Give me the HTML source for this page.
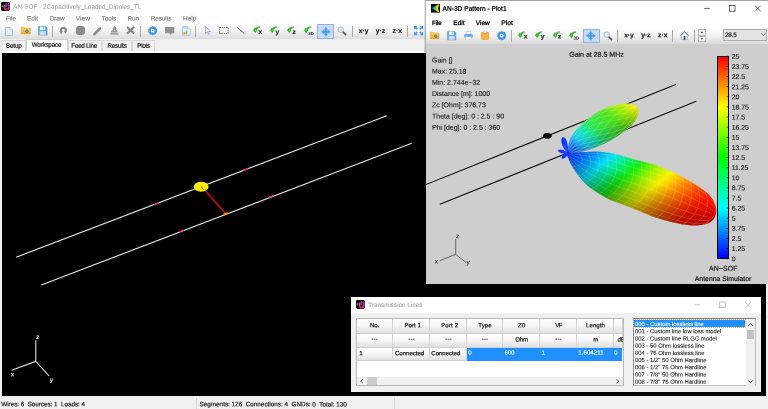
<!DOCTYPE html>
<html><head><meta charset="utf-8"><title>AN-SOF</title>
<style>
html,body{margin:0;padding:0}
body{width:768px;height:409px;overflow:hidden;position:relative;background:#f0f0f0;font-family:"Liberation Sans",sans-serif}
.b{position:absolute;display:block;box-sizing:border-box}
.tx{left:0;top:0}
#w{position:absolute;left:0;top:0;width:768px;height:409px;overflow:hidden;will-change:transform}
text{white-space:pre}
svg{overflow:visible}
</style></head><body><div id="w">
<svg width="0" height="0" style="position:absolute"><defs>
<linearGradient id="gFolder" x1="0" y1="0" x2="0" y2="1"><stop offset="0" stop-color="#ffd257"/><stop offset="1" stop-color="#f5a21b"/></linearGradient>
<linearGradient id="gBlue" x1="0" y1="0" x2="0" y2="1"><stop offset="0" stop-color="#7cc0fa"/><stop offset="1" stop-color="#3a92e8"/></linearGradient>
<linearGradient id="gDoc" x1="0" y1="0" x2="1" y2="1"><stop offset="0" stop-color="#ffffff"/><stop offset="1" stop-color="#d4e6f7"/></linearGradient>
</defs></svg>
<div class="b" style="left:0.00px;top:0.00px;width:768.00px;height:23.30px;background:#fff"></div>
<svg class="b" style="left:1.10px;top:1.75px;" width="8.9" height="8.9" viewBox="0 0 8.9 8.9"><rect x="0" y="0" width="8.9" height="8.9" rx="1.3" fill="#050505"/><ellipse cx="1.6" cy="4.2" rx="0.75" ry="1.3" fill="#6f9f38"/><path d="M3.5 2.6V5.2a2.1 2.5 0 0 0 4.2 0V1.5" fill="none" stroke="#d6379c" stroke-width="1.5"/><path d="M7.5 1.5V5.6" stroke="#8c44b4" stroke-width="1.1"/><ellipse cx="3.6" cy="4.2" rx="0.7" ry="1.3" fill="#e0603c"/><ellipse cx="5.5" cy="3.8" rx="0.9" ry="1.5" fill="#3868e0"/><ellipse cx="5.3" cy="7.2" rx="1.3" ry="0.8" fill="#f0203c"/><ellipse cx="5.4" cy="2" rx="0.9" ry="0.9" fill="#e040a0"/></svg>
<svg class="b tx" width="1" height="1"><text x="13.30" y="8.70" transform="rotate(0.04 13.3 8.7)" font-size="6.36" fill="#9a9a9a" stroke="#9a9a9a" stroke-width="0.05">AN-SOF - 2Capacitively_Loaded_Dipoles_TL</text></svg>
<svg class="b tx" width="1" height="1"><text x="6.00" y="20.40" transform="rotate(0.04 6.0 20.4)" font-size="6.30" letter-spacing="-0.088" fill="#6c6c6c" stroke="#6c6c6c" stroke-width="0.08">File</text></svg>
<svg class="b tx" width="1" height="1"><text x="27.00" y="20.40" transform="rotate(0.04 27.0 20.4)" font-size="6.38" fill="#6c6c6c" stroke="#6c6c6c" stroke-width="0.08">Edit</text></svg>
<svg class="b tx" width="1" height="1"><text x="49.70" y="20.40" transform="rotate(0.04 49.7 20.4)" font-size="6.43" fill="#6c6c6c" stroke="#6c6c6c" stroke-width="0.08">Draw</text></svg>
<svg class="b tx" width="1" height="1"><text x="75.80" y="20.40" transform="rotate(0.04 75.8 20.4)" font-size="6.61" fill="#6c6c6c" stroke="#6c6c6c" stroke-width="0.08">View</text></svg>
<svg class="b tx" width="1" height="1"><text x="101.70" y="20.40" transform="rotate(0.04 101.7 20.4)" font-size="6.30" letter-spacing="-0.042" fill="#6c6c6c" stroke="#6c6c6c" stroke-width="0.08">Tools</text></svg>
<svg class="b tx" width="1" height="1"><text x="127.50" y="20.40" transform="rotate(0.04 127.5 20.4)" font-size="6.30" letter-spacing="-0.019" fill="#6c6c6c" stroke="#6c6c6c" stroke-width="0.08">Run</text></svg>
<svg class="b tx" width="1" height="1"><text x="150.80" y="20.40" transform="rotate(0.04 150.8 20.4)" font-size="6.30" letter-spacing="-0.073" fill="#6c6c6c" stroke="#6c6c6c" stroke-width="0.08">Results</text></svg>
<svg class="b tx" width="1" height="1"><text x="183.00" y="20.40" transform="rotate(0.04 183.0 20.4)" font-size="6.47" fill="#6c6c6c" stroke="#6c6c6c" stroke-width="0.08">Help</text></svg>
<div class="b" style="left:0.00px;top:23.30px;width:768.00px;height:15.50px;background:linear-gradient(#ffffff 0%,#f4f4f4 45%,#dddddd 100%)"></div>
<div class="b" style="left:0.00px;top:38.80px;width:768.00px;height:13.80px;background:#f0f0f0"></div>
<div class="b" style="left:0.00px;top:50.60px;width:768.00px;height:2.00px;background:#fdfdfd"></div>
<div class="b" style="left:1.30px;top:40.40px;width:24.90px;height:10.20px;background:#f0f0f0;border:0.5px solid #d9d9d9;border-bottom:none"></div>
<svg class="b tx" width="1" height="1"><text x="5.80" y="47.80" transform="rotate(0.04 5.8 47.8)" font-size="6.30" letter-spacing="-0.113" fill="#111" stroke="#111" stroke-width="0.18">Setup</text></svg>
<div class="b" style="left:25.80px;top:39.20px;width:42.20px;height:12.30px;background:#fff;border:0.5px solid #d0d0d0;border-bottom:none"></div>
<svg class="b tx" width="1" height="1"><text x="31.70" y="46.70" transform="rotate(0.04 31.7 46.7)" font-size="6.30" letter-spacing="-0.211" fill="#111" stroke="#111" stroke-width="0.18">Workspace</text></svg>
<div class="b" style="left:68.00px;top:40.40px;width:34.40px;height:10.20px;background:#f0f0f0;border:0.5px solid #d9d9d9;border-bottom:none"></div>
<svg class="b tx" width="1" height="1"><text x="71.30" y="47.80" transform="rotate(0.04 71.3 47.8)" font-size="6.30" letter-spacing="-0.258" fill="#111" stroke="#111" stroke-width="0.18">Feed Line</text></svg>
<div class="b" style="left:102.00px;top:40.40px;width:30.40px;height:10.20px;background:#f0f0f0;border:0.5px solid #d9d9d9;border-bottom:none"></div>
<svg class="b tx" width="1" height="1"><text x="107.50" y="47.80" transform="rotate(0.04 107.5 47.8)" font-size="6.30" letter-spacing="-0.258" fill="#111" stroke="#111" stroke-width="0.18">Results</text></svg>
<div class="b" style="left:132.00px;top:40.40px;width:23.10px;height:10.20px;background:#f0f0f0;border:0.5px solid #d9d9d9;border-bottom:none"></div>
<svg class="b tx" width="1" height="1"><text x="137.20" y="47.80" transform="rotate(0.04 137.2 47.8)" font-size="6.30" letter-spacing="-0.241" fill="#111" stroke="#111" stroke-width="0.18">Plots</text></svg>
<div class="b" style="left:2.00px;top:52.60px;width:763.60px;height:343.20px;background:#000"></div>
<div class="b" style="left:0.00px;top:395.80px;width:768.00px;height:13.20px;background:#f0f0f0"></div>
<div class="b" style="left:196.00px;top:397.50px;width:0.60px;height:11.50px;background:#d7d7d7"></div>
<div class="b" style="left:393.60px;top:397.50px;width:0.60px;height:11.50px;background:#d7d7d7"></div>
<svg class="b tx" width="1" height="1"><text x="1.30" y="406.30" transform="rotate(0.04 1.3 406.3)" font-size="6.30" letter-spacing="-0.023" fill="#1a1a1a" stroke="#1a1a1a" stroke-width="0.18">Wires: 6  Sources: 1  Loads: 4</text></svg>
<svg class="b tx" width="1" height="1"><text x="199.50" y="406.30" transform="rotate(0.04 199.5 406.3)" font-size="6.35" fill="#1a1a1a" stroke="#1a1a1a" stroke-width="0.18">Segments: 126  Connections: 4  GNDs: 0  Total: 130</text></svg>
<svg class="b" style="left:5.00px;top:26.60px;" width="8" height="9" viewBox="0 0 8 9"><path d="M0.4 0.4h4.6l2.5 2.5v5.7h-7.1z" fill="url(#gDoc)" stroke="#7fb2e6" stroke-width="0.7"/><path d="M5 0.4v2.5h2.5" fill="#eaf3fc" stroke="#7fb2e6" stroke-width="0.6"/></svg>
<svg class="b" style="left:20.60px;top:26.40px" width="9.6" height="9.6" viewBox="0 0 10 10"><path d="M0.3 1.1h3.5l0.9 1h5v6.3h-9.4z" fill="url(#gFolder)" stroke="#eea320" stroke-width="0.4"/><path d="M6.2 3.5l2.1 2.1-2.1 2.1-2.1-2.1z" fill="#2a7fdc"/><path d="M6.2 4.7v1.8M5.3 5.6h1.8" stroke="#9cc8f4" stroke-width="0.45"/></svg>
<svg class="b" style="left:37.80px;top:26.40px" width="9.6" height="9.6" viewBox="0 0 10 10"><path d="M0.5 0.5h7.8l1.2 1.2v7.8h-9z" fill="#5aaaf2" stroke="#3a90e2" stroke-width="0.5"/><rect x="2" y="0.8" width="5.4" height="3.4" fill="#f4f9fe"/><rect x="5.6" y="1.2" width="1.1" height="2.4" fill="#5aaaf2"/><rect x="1.8" y="5.4" width="6.4" height="3.9" fill="#d6dbe1"/></svg>
<div class="b" style="left:51.55px;top:25.50px;width:0.90px;height:11.50px;background:#a9a9a9"></div>
<svg class="b" style="left:59.30px;top:26.30px;" width="8.6" height="8.6" viewBox="0 0 8.6 8.6"><path d="M2.3 5.6A2.5 2.5 0 1 1 5.6 6.5" fill="none" stroke="#8a8a8a" stroke-width="2.3"/><path d="M0.2 4.9l3.9 0.2-2 3.4z" fill="#8a8a8a"/></svg>
<div class="b" style="left:75.7px;top:26.3px;width:9.3px;height:8.9px;border-radius:3.3px;background:#8a8a8a"></div>
<svg class="b" style="left:93.00px;top:26.50px;" width="8.8" height="8.8" viewBox="0 0 8.8 8.8"><path d="M1.5 7.1L7.1 1.5" stroke="#8a8a8a" stroke-width="2.5" stroke-linecap="round"/><path d="M0.2 8.6l0.5-2 1.5 1.5z" fill="#8a8a8a"/></svg>
<svg class="b" style="left:110.20px;top:26.30px;" width="8.8" height="8.6" viewBox="0 0 8.8 8.6"><path d="M0.3 7.9h8.2" stroke="#8a8a8a" stroke-width="1.2"/><path d="M1 6.4h6.6l-0.5-2.2h-1.3l0.5-2-1.9-2.1-1.7 2.1 0.7 2h-1.5z" fill="#8a8a8a"/><path d="M3.3 5.6l1.1-2.6 1.1 2.6z" fill="#e6e6e6"/></svg>
<svg class="b" style="left:126.00px;top:26.40px;" width="9.2" height="8.4" viewBox="0 0 9.2 8.4"><path d="M1 0.9l7.2 6.6M8.2 0.9l-7.2 6.6" stroke="#7e7e7e" stroke-width="2.1"/></svg>
<div class="b" style="left:140.05px;top:25.50px;width:0.90px;height:11.50px;background:#a9a9a9"></div>
<svg class="b" style="left:148.00px;top:26.40px" width="9.4" height="9.4" viewBox="0 0 10 10"><circle cx="5" cy="5" r="3.7" fill="none" stroke="#3b8ce2" stroke-width="2.2" stroke-dasharray="1.7 0.62"/><circle cx="5" cy="5" r="3.1" fill="none" stroke="#4797e8" stroke-width="2.2"/><circle cx="5" cy="5" r="1.6" fill="#f4f9ff"/><circle cx="5" cy="5" r="0.7" fill="#5aa0ea"/></svg>
<svg class="b" style="left:164.60px;top:27.00px;" width="9.4" height="8.4" viewBox="0 0 9.4 8.4"><path d="M0.8 0h7.8a.8.8 0 0 1 .8.8v4.6a.8.8 0 0 1-.8.8h-1.6l-1.3 1.8-1.3-1.8h-3.6a.8.8 0 0 1-.8-.8v-4.6a.8.8 0 0 1 .8-.8z" fill="#909090"/></svg>
<svg class="b" style="left:182.00px;top:26.30px;" width="8.6" height="9.6" viewBox="0 0 8.6 9.6"><path d="M0.4 0.4h5.2l2.6 2.6v6.2h-7.8z" fill="#eef5fd" stroke="#86b6ea" stroke-width="0.7"/><path d="M0.8 0.8h4.6l1.4 1.4v0.6h-6z" fill="#b9d8f6"/><path d="M5.6 0.4v2.6h2.6" fill="#dcebfa" stroke="#86b6ea" stroke-width="0.5"/><rect x="1.6" y="6" width="1.1" height="2.4" fill="#e8573f"/><rect x="2.9" y="5.2" width="1.1" height="3.2" fill="#f3b833"/><rect x="4.2" y="4.4" width="1.1" height="4" fill="#5cbf50"/></svg>
<div class="b" style="left:195.05px;top:25.50px;width:0.90px;height:11.50px;background:#a9a9a9"></div>
<svg class="b" style="left:204.60px;top:26.40px;" width="6.2" height="9" viewBox="0 0 6.2 9"><path d="M0.5 0.4v7l1.7-1.5 1.2 2.6 1-.5-1.2-2.5h2.3z" fill="#eef4fd" stroke="#6f8fd0" stroke-width="0.6"/></svg>
<svg class="b" style="left:219.30px;top:27.40px;" width="9.6" height="7" viewBox="0 0 9.6 7"><rect x="0.5" y="0.5" width="8.6" height="6" fill="none" stroke="#5c5c5c" stroke-width="0.8" stroke-dasharray="1.5 0.7"/></svg>
<svg class="b" style="left:236.80px;top:27.20px;" width="7.4" height="6.8" viewBox="0 0 7.4 6.8"><path d="M0.3 0.3l6.8 6.2" stroke="#444" stroke-width="0.9"/></svg>
<svg class="b" style="left:253.00px;top:26.30px" width="8" height="7" viewBox="0 0 8 7"><path d="M0.25 4.5L2 1.7L2.7 2.4C3.4 1.2 5 0.5 6.7 0.5L6.9 1.7C5.6 1.7 4.4 2.3 3.7 3.4L4.3 4L2.5 6.8Z" fill="#34b82c" stroke="#1e8c1a" stroke-width="0.3" stroke-linejoin="round"/><circle cx="2.4" cy="4.2" r="0.8" fill="#62dc50" opacity="0.8"/><path d="M5 1.05C5.6 0.95 6.2 0.95 6.7 1" stroke="#d0f0e0" stroke-width="0.35" fill="none"/></svg>
<svg class="b tx" width="1" height="1"><text x="258.40" y="33.90" transform="rotate(0.04 258.4 33.9)" font-size="6.60" font-weight="bold" fill="#2a2a2a" stroke="#2a2a2a" stroke-width="0.18">x</text></svg>
<svg class="b" style="left:270.00px;top:26.30px" width="8" height="7" viewBox="0 0 8 7"><path d="M0.25 4.5L2 1.7L2.7 2.4C3.4 1.2 5 0.5 6.7 0.5L6.9 1.7C5.6 1.7 4.4 2.3 3.7 3.4L4.3 4L2.5 6.8Z" fill="#34b82c" stroke="#1e8c1a" stroke-width="0.3" stroke-linejoin="round"/><circle cx="2.4" cy="4.2" r="0.8" fill="#62dc50" opacity="0.8"/><path d="M5 1.05C5.6 0.95 6.2 0.95 6.7 1" stroke="#d0f0e0" stroke-width="0.35" fill="none"/></svg>
<svg class="b tx" width="1" height="1"><text x="275.40" y="33.90" transform="rotate(0.04 275.4 33.9)" font-size="6.60" font-weight="bold" fill="#2a2a2a" stroke="#2a2a2a" stroke-width="0.18">y</text></svg>
<svg class="b" style="left:287.00px;top:26.30px" width="8" height="7" viewBox="0 0 8 7"><path d="M0.25 4.5L2 1.7L2.7 2.4C3.4 1.2 5 0.5 6.7 0.5L6.9 1.7C5.6 1.7 4.4 2.3 3.7 3.4L4.3 4L2.5 6.8Z" fill="#34b82c" stroke="#1e8c1a" stroke-width="0.3" stroke-linejoin="round"/><circle cx="2.4" cy="4.2" r="0.8" fill="#62dc50" opacity="0.8"/><path d="M5 1.05C5.6 0.95 6.2 0.95 6.7 1" stroke="#d0f0e0" stroke-width="0.35" fill="none"/></svg>
<svg class="b tx" width="1" height="1"><text x="292.40" y="33.90" transform="rotate(0.04 292.4 33.9)" font-size="6.60" font-weight="bold" fill="#2a2a2a" stroke="#2a2a2a" stroke-width="0.18">z</text></svg>
<svg class="b" style="left:304.00px;top:26.30px" width="8" height="7" viewBox="0 0 8 7"><path d="M0.25 4.5L2 1.7L2.7 2.4C3.4 1.2 5 0.5 6.7 0.5L6.9 1.7C5.6 1.7 4.4 2.3 3.7 3.4L4.3 4L2.5 6.8Z" fill="#34b82c" stroke="#1e8c1a" stroke-width="0.3" stroke-linejoin="round"/><circle cx="2.4" cy="4.2" r="0.8" fill="#62dc50" opacity="0.8"/><path d="M5 1.05C5.6 0.95 6.2 0.95 6.7 1" stroke="#d0f0e0" stroke-width="0.35" fill="none"/></svg>
<svg class="b tx" width="1" height="1"><text x="308.20" y="34.90" transform="rotate(0.04 308.2 34.9)" font-size="4.40" font-weight="bold" fill="#223">3D</text></svg>
<div class="b" style="left:317.00px;top:24.20px;width:16.80px;height:14.40px;background:#c9daf4;border:0.6px solid #8fb0e6"></div>
<svg class="b" style="left:320.60px;top:26.60px" width="9.6" height="9.6" viewBox="0 0 10 10"><path d="M5 0.1l2 2.7h-1.1v1.3h1.3v-1.1l2.7 2-2.7 2v-1.1h-1.3v1.3h1.1l-2 2.7-2-2.7h1.1v-1.3h-1.3v1.1l-2.7-2 2.7-2v1.1h1.3v-1.3h-1.1z" fill="#3f9cf0" stroke="#3f9cf0" stroke-width="0.25" stroke-linejoin="round"/></svg>
<svg class="b" style="left:337.40px;top:26.40px" width="9.6" height="9.6" viewBox="0 0 10 10"><path d="M5.6 5.6l3.4 3.4" stroke="#555" stroke-width="1.7" stroke-linecap="round"/><circle cx="3.8" cy="3.8" r="2.9" fill="#d9ecfb" stroke="#a9b4c0" stroke-width="0.9"/></svg>
<div class="b" style="left:352.25px;top:25.50px;width:0.90px;height:11.50px;background:#a9a9a9"></div>
<svg class="b tx" width="1" height="1"><text x="358.80" y="33.00" transform="rotate(0.04 358.8 33.0)" font-size="6.57" font-weight="bold" fill="#222" stroke="#222" stroke-width="0.18">x·y</text></svg>
<svg class="b tx" width="1" height="1"><text x="375.80" y="33.00" transform="rotate(0.04 375.8 33.0)" font-size="6.84" font-weight="bold" fill="#222" stroke="#222" stroke-width="0.18">y·z</text></svg>
<svg class="b tx" width="1" height="1"><text x="392.50" y="33.00" transform="rotate(0.04 392.5 33.0)" font-size="6.84" font-weight="bold" fill="#222" stroke="#222" stroke-width="0.18">z·x</text></svg>
<div class="b" style="left:407.05px;top:25.50px;width:0.90px;height:11.50px;background:#a9a9a9"></div>
<svg class="b" style="left:414.20px;top:26.20px;" width="9.2" height="9.2" viewBox="0 0 9.2 9.2"><g fill="#3c9ae8"><path d="M0 0h3.6l-1.2 1.2 1.4 1.4-1.2 1.2-1.4-1.4-1.2 1.2z"/><path d="M9.2 0v3.6l-1.2-1.2-1.4 1.4-1.2-1.2 1.4-1.4-1.2-1.2z"/><path d="M0 9.2v-3.6l1.2 1.2 1.4-1.4 1.2 1.2-1.4 1.4 1.2 1.2z"/><path d="M9.2 9.2h-3.6l1.2-1.2-1.4-1.4 1.2-1.2 1.4 1.4 1.2-1.2z"/></g></svg>
<svg class="b" style="left:0.00px;top:0.00px;" width="768" height="409" viewBox="0 0 768 409"><g stroke-linecap="butt" fill="none">
<path d="M16.2 257.2L386.7 115.8M41.3 285L411.7 143.3" stroke="#e2e2e2" stroke-width="1.15"/>
<path d="M202 187L225.8 213.7" stroke="#ee0000" stroke-width="1.3"/>
<path d="M223.6 214.6l4.4-1.7" stroke="#ff9a00" stroke-width="1.6"/>
<g stroke="#ff1493" stroke-width="1.5">
<path d="M154.3 204.6l4.8-1.84"/><path d="M243.4 170.4l4.8-1.84"/><path d="M268.9 197.2l4.8-1.84"/><path d="M179 231.9l4.8-1.84"/></g>
<ellipse cx="201.2" cy="186.7" rx="7.4" ry="5" fill="#ffee00" stroke="none"/>
<path d="M201.2 186.7l2.6 2.9" stroke="#e00000" stroke-width="0.8"/>
<path d="M35.8 340.3V361.3L11.7 370.2M35.8 361.3L49.2 376" stroke="#e6e6e6" stroke-width="1.05"/>
</g></svg>
<svg class="b tx" width="1" height="1"><text x="36.20" y="339.00" transform="rotate(0.04 36.2 339.0)" font-size="6.00" fill="#e8e8f4" stroke="#e8e8f4" stroke-width="0.18">z</text></svg>
<svg class="b tx" width="1" height="1"><text x="11.00" y="376.20" transform="rotate(0.04 11.0 376.2)" font-size="6.00" fill="#e8e8f4" stroke="#e8e8f4" stroke-width="0.18">x</text></svg>
<svg class="b tx" width="1" height="1"><text x="50.00" y="381.80" transform="rotate(0.04 50.0 381.8)" font-size="6.00" fill="#e8e8f4" stroke="#e8e8f4" stroke-width="0.18">y</text></svg>
<div class="b" style="left:424.20px;top:0.00px;width:1.80px;height:285.50px;background:linear-gradient(90deg,rgba(0,0,0,0.0),rgba(0,0,0,0.4))"></div>
<div class="b" style="left:425.80px;top:0.00px;width:342.20px;height:284.00px;background:#fff"></div>
<div class="b" style="left:425.80px;top:0.00px;width:342.20px;height:0.60px;background:#a6a6a6"></div>
<svg class="b" style="left:430.80px;top:4.20px;" width="9" height="8.6" viewBox="0 0 9 8.6"><defs><linearGradient id="gJet" x1="0" y1="0" x2="1" y2="0"><stop offset="0" stop-color="#1038ff"/><stop offset="0.3" stop-color="#18c8e8"/><stop offset="0.5" stop-color="#30d830"/><stop offset="0.7" stop-color="#ffe000"/><stop offset="1" stop-color="#ff7a00"/></linearGradient></defs><rect width="9" height="8.6" fill="#050505"/><path d="M0.6 4.3C2.6 3.4 5 2 6.8 0.6C8.6 0.5 8.9 1.4 8.2 1.9C6.9 2.9 6.9 5.7 8.2 6.7C8.9 7.2 8.6 8.1 6.8 8C5 6.6 2.6 5.2 0.6 4.3z" fill="url(#gJet)"/></svg>
<svg class="b tx" width="1" height="1"><text x="442.50" y="10.80" transform="rotate(0.04 442.5 10.8)" font-size="6.64" fill="#000" stroke="#000" stroke-width="0.25">AN-3D Pattern - Plot1</text></svg>
<svg class="b" style="left:700.00px;top:0.00px;" width="68" height="16" viewBox="0 0 68 16"><g fill="none" stroke="#222" stroke-width="0.7"><path d="M4.2 8.4h5.6"/><rect x="29.4" y="5.6" width="5.6" height="5.6"/><path d="M55.1 5.6l5.6 5.7M60.7 5.6l-5.6 5.7"/></g></svg>
<svg class="b tx" width="1" height="1"><text x="432.00" y="25.10" transform="rotate(0.04 432.0 25.1)" font-size="6.30" letter-spacing="-0.138" fill="#000" stroke="#000" stroke-width="0.28">File</text></svg>
<svg class="b tx" width="1" height="1"><text x="453.30" y="25.10" transform="rotate(0.04 453.3 25.1)" font-size="6.50" fill="#000" stroke="#000" stroke-width="0.28">Edit</text></svg>
<svg class="b tx" width="1" height="1"><text x="475.80" y="25.10" transform="rotate(0.04 475.8 25.1)" font-size="6.47" fill="#000" stroke="#000" stroke-width="0.28">View</text></svg>
<svg class="b tx" width="1" height="1"><text x="501.20" y="25.10" transform="rotate(0.04 501.2 25.1)" font-size="6.73" fill="#000" stroke="#000" stroke-width="0.28">Plot</text></svg>
<div class="b" style="left:425.80px;top:28.20px;width:342.20px;height:15.50px;background:linear-gradient(#ffffff 0%,#f2f2f2 45%,#d9d9d9 100%)"></div>
<div class="b" style="left:425.80px;top:43.70px;width:342.20px;height:240.30px;background:#cecece"></div>
<svg class="b" style="left:430.00px;top:31.20px" width="9.4" height="9.4" viewBox="0 0 10 10"><path d="M0.3 1.1h3.5l0.9 1h5v6.3h-9.4z" fill="url(#gFolder)" stroke="#eea320" stroke-width="0.4"/><path d="M6.2 3.5l2.1 2.1-2.1 2.1-2.1-2.1z" fill="#2a7fdc"/><path d="M6.2 4.7v1.8M5.3 5.6h1.8" stroke="#9cc8f4" stroke-width="0.45"/></svg>
<svg class="b" style="left:446.70px;top:31.20px" width="9.4" height="9.4" viewBox="0 0 10 10"><path d="M0.5 0.5h7.8l1.2 1.2v7.8h-9z" fill="#5aaaf2" stroke="#3a90e2" stroke-width="0.5"/><rect x="2" y="0.8" width="5.4" height="3.4" fill="#f4f9fe"/><rect x="5.6" y="1.2" width="1.1" height="2.4" fill="#5aaaf2"/><rect x="1.8" y="5.4" width="6.4" height="3.9" fill="#d6dbe1"/></svg>
<svg class="b" style="left:464.20px;top:31.00px;" width="9" height="8.8" viewBox="0 0 9 8.8"><rect x="2" y="0.3" width="5" height="3.2" fill="#f6fafe" stroke="#8abcf0" stroke-width="0.5"/><rect x="0.3" y="3.2" width="8.4" height="3.4" rx="0.7" fill="#4c9cea"/><rect x="0.8" y="3.5" width="7.4" height="1" fill="#7cbaf4"/><rect x="1.7" y="5.8" width="5.6" height="2.7" fill="#f2f5f9" stroke="#b8c4d0" stroke-width="0.4"/><circle cx="7.9" cy="6.6" r="0.5" fill="#f08030"/></svg>
<svg class="b" style="left:481.30px;top:31.00px;" width="8.2" height="9" viewBox="0 0 8.2 9"><rect x="0.3" y="1" width="7.6" height="7.8" rx="0.7" fill="#f59a26"/><rect x="1" y="2.2" width="6.2" height="6" fill="#fbb040"/><rect x="2.5" y="0.1" width="3.2" height="1.9" rx="0.4" fill="#ececec" stroke="#b88a40" stroke-width="0.3"/></svg>
<svg class="b" style="left:497.40px;top:31.20px" width="9.4" height="9.4" viewBox="0 0 10 10"><circle cx="5" cy="5" r="3.7" fill="none" stroke="#3b8ce2" stroke-width="2.2" stroke-dasharray="1.7 0.62"/><circle cx="5" cy="5" r="3.1" fill="none" stroke="#4797e8" stroke-width="2.2"/><circle cx="5" cy="5" r="1.6" fill="#f4f9ff"/><circle cx="5" cy="5" r="0.7" fill="#5aa0ea"/></svg>
<div class="b" style="left:511.25px;top:30.40px;width:0.90px;height:11.60px;background:#a9a9a9"></div>
<svg class="b" style="left:518.30px;top:30.70px" width="8" height="7" viewBox="0 0 8 7"><path d="M0.25 4.5L2 1.7L2.7 2.4C3.4 1.2 5 0.5 6.7 0.5L6.9 1.7C5.6 1.7 4.4 2.3 3.7 3.4L4.3 4L2.5 6.8Z" fill="#34b82c" stroke="#1e8c1a" stroke-width="0.3" stroke-linejoin="round"/><circle cx="2.4" cy="4.2" r="0.8" fill="#62dc50" opacity="0.8"/><path d="M5 1.05C5.6 0.95 6.2 0.95 6.7 1" stroke="#d0f0e0" stroke-width="0.35" fill="none"/></svg>
<svg class="b tx" width="1" height="1"><text x="523.70" y="38.60" transform="rotate(0.04 523.7 38.6)" font-size="6.60" font-weight="bold" fill="#2a2a2a" stroke="#2a2a2a" stroke-width="0.18">x</text></svg>
<svg class="b" style="left:535.30px;top:30.70px" width="8" height="7" viewBox="0 0 8 7"><path d="M0.25 4.5L2 1.7L2.7 2.4C3.4 1.2 5 0.5 6.7 0.5L6.9 1.7C5.6 1.7 4.4 2.3 3.7 3.4L4.3 4L2.5 6.8Z" fill="#34b82c" stroke="#1e8c1a" stroke-width="0.3" stroke-linejoin="round"/><circle cx="2.4" cy="4.2" r="0.8" fill="#62dc50" opacity="0.8"/><path d="M5 1.05C5.6 0.95 6.2 0.95 6.7 1" stroke="#d0f0e0" stroke-width="0.35" fill="none"/></svg>
<svg class="b tx" width="1" height="1"><text x="540.70" y="38.60" transform="rotate(0.04 540.7 38.6)" font-size="6.60" font-weight="bold" fill="#2a2a2a" stroke="#2a2a2a" stroke-width="0.18">y</text></svg>
<svg class="b" style="left:552.50px;top:30.70px" width="8" height="7" viewBox="0 0 8 7"><path d="M0.25 4.5L2 1.7L2.7 2.4C3.4 1.2 5 0.5 6.7 0.5L6.9 1.7C5.6 1.7 4.4 2.3 3.7 3.4L4.3 4L2.5 6.8Z" fill="#34b82c" stroke="#1e8c1a" stroke-width="0.3" stroke-linejoin="round"/><circle cx="2.4" cy="4.2" r="0.8" fill="#62dc50" opacity="0.8"/><path d="M5 1.05C5.6 0.95 6.2 0.95 6.7 1" stroke="#d0f0e0" stroke-width="0.35" fill="none"/></svg>
<svg class="b tx" width="1" height="1"><text x="557.90" y="38.60" transform="rotate(0.04 557.9 38.6)" font-size="6.60" font-weight="bold" fill="#2a2a2a" stroke="#2a2a2a" stroke-width="0.18">z</text></svg>
<svg class="b" style="left:569.20px;top:30.70px" width="8" height="7" viewBox="0 0 8 7"><path d="M0.25 4.5L2 1.7L2.7 2.4C3.4 1.2 5 0.5 6.7 0.5L6.9 1.7C5.6 1.7 4.4 2.3 3.7 3.4L4.3 4L2.5 6.8Z" fill="#34b82c" stroke="#1e8c1a" stroke-width="0.3" stroke-linejoin="round"/><circle cx="2.4" cy="4.2" r="0.8" fill="#62dc50" opacity="0.8"/><path d="M5 1.05C5.6 0.95 6.2 0.95 6.7 1" stroke="#d0f0e0" stroke-width="0.35" fill="none"/></svg>
<svg class="b tx" width="1" height="1"><text x="573.50" y="39.60" transform="rotate(0.04 573.5 39.6)" font-size="4.40" font-weight="bold" fill="#223">3D</text></svg>
<div class="b" style="left:582.50px;top:28.80px;width:17.00px;height:14.50px;background:#c9daf4;border:0.6px solid #8fb0e6"></div>
<svg class="b" style="left:586.20px;top:31.30px" width="9.6" height="9.6" viewBox="0 0 10 10"><path d="M5 0.1l2 2.7h-1.1v1.3h1.3v-1.1l2.7 2-2.7 2v-1.1h-1.3v1.3h1.1l-2 2.7-2-2.7h1.1v-1.3h-1.3v1.1l-2.7-2 2.7-2v1.1h1.3v-1.3h-1.1z" fill="#3f9cf0" stroke="#3f9cf0" stroke-width="0.25" stroke-linejoin="round"/></svg>
<svg class="b" style="left:603.00px;top:31.20px" width="9.6" height="9.6" viewBox="0 0 10 10"><path d="M5.6 5.6l3.4 3.4" stroke="#555" stroke-width="1.7" stroke-linecap="round"/><circle cx="3.8" cy="3.8" r="2.9" fill="#d9ecfb" stroke="#a9b4c0" stroke-width="0.9"/></svg>
<div class="b" style="left:617.05px;top:30.40px;width:0.90px;height:11.60px;background:#a9a9a9"></div>
<svg class="b tx" width="1" height="1"><text x="624.20" y="37.30" transform="rotate(0.04 624.2 37.3)" font-size="6.57" font-weight="bold" fill="#222" stroke="#222" stroke-width="0.18">x·y</text></svg>
<svg class="b tx" width="1" height="1"><text x="641.30" y="37.30" transform="rotate(0.04 641.3 37.3)" font-size="6.84" font-weight="bold" fill="#222" stroke="#222" stroke-width="0.18">y·z</text></svg>
<svg class="b tx" width="1" height="1"><text x="658.00" y="37.30" transform="rotate(0.04 658.0 37.3)" font-size="6.84" font-weight="bold" fill="#222" stroke="#222" stroke-width="0.18">z·x</text></svg>
<div class="b" style="left:672.05px;top:30.40px;width:0.90px;height:11.60px;background:#a9a9a9"></div>
<svg class="b" style="left:680.00px;top:30.80px;" width="9" height="9.2" viewBox="0 0 9 9.2"><path d="M0.4 4.6l4.1-4.1 4.1 4.1" fill="none" stroke="#3f8fe6" stroke-width="0.9"/><path d="M1.4 4.4l3.1-3 3.1 3v4.4h-6.2z" fill="#f4f8fd" stroke="#6aa6e8" stroke-width="0.6"/><rect x="3.7" y="5" width="1.7" height="3.8" fill="#444"/></svg>
<div class="b" style="left:693.75px;top:30.40px;width:0.90px;height:11.60px;background:#a9a9a9"></div>
<div class="b" style="left:698.00px;top:29.20px;width:7.80px;height:6.40px;background:#f4f4f4;border:0.5px solid #b8b8b8"></div>
<div class="b" style="left:698.00px;top:36.10px;width:7.80px;height:6.40px;background:#f4f4f4;border:0.5px solid #b8b8b8"></div>
<svg class="b" style="left:698.00px;top:29.20px;" width="7.8" height="13.3" viewBox="0 0 7.8 13.3"><path d="M2.7 4l1.2-1.5 1.2 1.5z" fill="#222"/><path d="M2.7 9.3l1.2 1.5 1.2-1.5z" fill="#222"/></svg>
<div class="b" style="left:722.50px;top:29.20px;width:44.70px;height:11.40px;background:#e3e3e3;border:0.6px solid #adadad"></div>
<svg class="b tx" width="1" height="1"><text x="725.00" y="37.00" transform="rotate(0.04 725.0 37.0)" font-size="6.30" letter-spacing="-0.140" fill="#222" stroke="#222" stroke-width="0.18">28.5</text></svg>
<svg class="b" style="left:760.60px;top:33.40px;" width="5" height="3.4" viewBox="0 0 5 3.4"><path d="M0.3 0.4l2.2 2.2 2.2-2.2" fill="none" stroke="#444" stroke-width="0.7"/></svg>
<svg class="b tx" width="1" height="1"><text x="432.00" y="62.40" transform="rotate(0.04 432.0 62.4)" font-size="6.97" fill="#101010" stroke="#101010" stroke-width="0.1">Gain []</text></svg>
<svg class="b tx" width="1" height="1"><text x="432.00" y="73.62" transform="rotate(0.04 432.0 73.6)" font-size="6.97" fill="#101010" stroke="#101010" stroke-width="0.1">Max: 25.18</text></svg>
<svg class="b tx" width="1" height="1"><text x="432.00" y="84.84" transform="rotate(0.04 432.0 84.8)" font-size="6.97" fill="#101010" stroke="#101010" stroke-width="0.1">Min: 2.744e−32</text></svg>
<svg class="b tx" width="1" height="1"><text x="432.00" y="96.06" transform="rotate(0.04 432.0 96.1)" font-size="6.97" fill="#101010" stroke="#101010" stroke-width="0.1">Distance [m]: 1000</text></svg>
<svg class="b tx" width="1" height="1"><text x="432.00" y="107.28" transform="rotate(0.04 432.0 107.3)" font-size="6.97" fill="#101010" stroke="#101010" stroke-width="0.1">Zc [Ohm]: 376.73</text></svg>
<svg class="b tx" width="1" height="1"><text x="432.00" y="118.50" transform="rotate(0.04 432.0 118.5)" font-size="6.97" fill="#101010" stroke="#101010" stroke-width="0.1">Theta [deg]: 0 : 2.5 : 90</text></svg>
<svg class="b tx" width="1" height="1"><text x="432.00" y="129.72" transform="rotate(0.04 432.0 129.7)" font-size="6.97" fill="#101010" stroke="#101010" stroke-width="0.1">Phi [deg]: 0 : 2.5 : 360</text></svg>
<svg class="b tx" width="1" height="1"><text x="569.20" y="56.70" transform="rotate(0.04 569.2 56.7)" font-size="7.00" letter-spacing="0.002" fill="#101010" stroke="#101010" stroke-width="0.18">Gain at 28.5 MHz</text></svg>
<div class="b" style="left:717px;top:56px;width:11.8px;height:203px;border:0.6px solid #000;background:linear-gradient(#ff0000 0%,#ffff00 25%,#00ff00 50%,#00ffff 75%,#0000ff 100%)"></div>
<svg class="b tx" width="1" height="1"><text x="731.70" y="58.80" transform="rotate(0.04 731.7 58.8)" font-size="6.90" fill="#101010" stroke="#101010" stroke-width="0.1">25</text></svg>
<svg class="b tx" width="1" height="1"><text x="731.70" y="68.92" transform="rotate(0.04 731.7 68.9)" font-size="6.90" fill="#101010" stroke="#101010" stroke-width="0.1">23.75</text></svg>
<svg class="b tx" width="1" height="1"><text x="731.70" y="79.04" transform="rotate(0.04 731.7 79.0)" font-size="6.90" fill="#101010" stroke="#101010" stroke-width="0.1">22.5</text></svg>
<svg class="b tx" width="1" height="1"><text x="731.70" y="89.16" transform="rotate(0.04 731.7 89.2)" font-size="6.90" fill="#101010" stroke="#101010" stroke-width="0.1">21.25</text></svg>
<svg class="b tx" width="1" height="1"><text x="731.70" y="99.28" transform="rotate(0.04 731.7 99.3)" font-size="6.90" fill="#101010" stroke="#101010" stroke-width="0.1">20</text></svg>
<svg class="b tx" width="1" height="1"><text x="731.70" y="109.40" transform="rotate(0.04 731.7 109.4)" font-size="6.90" fill="#101010" stroke="#101010" stroke-width="0.1">18.75</text></svg>
<svg class="b tx" width="1" height="1"><text x="731.70" y="119.52" transform="rotate(0.04 731.7 119.5)" font-size="6.90" fill="#101010" stroke="#101010" stroke-width="0.1">17.5</text></svg>
<svg class="b tx" width="1" height="1"><text x="731.70" y="129.64" transform="rotate(0.04 731.7 129.6)" font-size="6.90" fill="#101010" stroke="#101010" stroke-width="0.1">16.25</text></svg>
<svg class="b tx" width="1" height="1"><text x="731.70" y="139.76" transform="rotate(0.04 731.7 139.8)" font-size="6.90" fill="#101010" stroke="#101010" stroke-width="0.1">15</text></svg>
<svg class="b tx" width="1" height="1"><text x="731.70" y="149.88" transform="rotate(0.04 731.7 149.9)" font-size="6.90" fill="#101010" stroke="#101010" stroke-width="0.1">13.75</text></svg>
<svg class="b tx" width="1" height="1"><text x="731.70" y="160.00" transform="rotate(0.04 731.7 160.0)" font-size="6.90" fill="#101010" stroke="#101010" stroke-width="0.1">12.5</text></svg>
<svg class="b tx" width="1" height="1"><text x="731.70" y="170.12" transform="rotate(0.04 731.7 170.1)" font-size="6.90" fill="#101010" stroke="#101010" stroke-width="0.1">11.25</text></svg>
<svg class="b tx" width="1" height="1"><text x="731.70" y="180.24" transform="rotate(0.04 731.7 180.2)" font-size="6.90" fill="#101010" stroke="#101010" stroke-width="0.1">10</text></svg>
<svg class="b tx" width="1" height="1"><text x="731.70" y="190.36" transform="rotate(0.04 731.7 190.4)" font-size="6.90" fill="#101010" stroke="#101010" stroke-width="0.1">8.75</text></svg>
<svg class="b tx" width="1" height="1"><text x="731.70" y="200.48" transform="rotate(0.04 731.7 200.5)" font-size="6.90" fill="#101010" stroke="#101010" stroke-width="0.1">7.5</text></svg>
<svg class="b tx" width="1" height="1"><text x="731.70" y="210.60" transform="rotate(0.04 731.7 210.6)" font-size="6.90" fill="#101010" stroke="#101010" stroke-width="0.1">6.25</text></svg>
<svg class="b tx" width="1" height="1"><text x="731.70" y="220.72" transform="rotate(0.04 731.7 220.7)" font-size="6.90" fill="#101010" stroke="#101010" stroke-width="0.1">5</text></svg>
<svg class="b tx" width="1" height="1"><text x="731.70" y="230.84" transform="rotate(0.04 731.7 230.8)" font-size="6.90" fill="#101010" stroke="#101010" stroke-width="0.1">3.75</text></svg>
<svg class="b tx" width="1" height="1"><text x="731.70" y="240.96" transform="rotate(0.04 731.7 241.0)" font-size="6.90" fill="#101010" stroke="#101010" stroke-width="0.1">2.5</text></svg>
<svg class="b tx" width="1" height="1"><text x="731.70" y="251.08" transform="rotate(0.04 731.7 251.1)" font-size="6.90" fill="#101010" stroke="#101010" stroke-width="0.1">1.25</text></svg>
<svg class="b tx" width="1" height="1"><text x="731.70" y="261.20" transform="rotate(0.04 731.7 261.2)" font-size="6.90" fill="#101010" stroke="#101010" stroke-width="0.1">0</text></svg>
<svg class="b" style="left:0.00px;top:0.00px;" width="768" height="409" viewBox="0 0 768 409"><path d="M726.4 56.30h2.4" stroke="#000" stroke-width="0.6"/><path d="M726.4 66.42h2.4" stroke="#000" stroke-width="0.6"/><path d="M726.4 76.54h2.4" stroke="#000" stroke-width="0.6"/><path d="M726.4 86.66h2.4" stroke="#000" stroke-width="0.6"/><path d="M726.4 96.78h2.4" stroke="#000" stroke-width="0.6"/><path d="M726.4 106.90h2.4" stroke="#000" stroke-width="0.6"/><path d="M726.4 117.02h2.4" stroke="#000" stroke-width="0.6"/><path d="M726.4 127.14h2.4" stroke="#000" stroke-width="0.6"/><path d="M726.4 137.26h2.4" stroke="#000" stroke-width="0.6"/><path d="M726.4 147.38h2.4" stroke="#000" stroke-width="0.6"/><path d="M726.4 157.50h2.4" stroke="#000" stroke-width="0.6"/><path d="M726.4 167.62h2.4" stroke="#000" stroke-width="0.6"/><path d="M726.4 177.74h2.4" stroke="#000" stroke-width="0.6"/><path d="M726.4 187.86h2.4" stroke="#000" stroke-width="0.6"/><path d="M726.4 197.98h2.4" stroke="#000" stroke-width="0.6"/><path d="M726.4 208.10h2.4" stroke="#000" stroke-width="0.6"/><path d="M726.4 218.22h2.4" stroke="#000" stroke-width="0.6"/><path d="M726.4 228.34h2.4" stroke="#000" stroke-width="0.6"/><path d="M726.4 238.46h2.4" stroke="#000" stroke-width="0.6"/><path d="M726.4 248.58h2.4" stroke="#000" stroke-width="0.6"/><path d="M726.4 258.70h2.4" stroke="#000" stroke-width="0.6"/></svg>
<svg class="b tx" width="1" height="1"><text x="709.00" y="270.80" transform="rotate(0.04 709.0 270.8)" font-size="7.00" letter-spacing="0.083" fill="#101010" stroke="#101010" stroke-width="0.18">AN−SOF</text></svg>
<svg class="b tx" width="1" height="1"><text x="694.80" y="281.00" transform="rotate(0.04 694.8 281.0)" font-size="6.87" fill="#101010" stroke="#101010" stroke-width="0.18">Antenna Simulator</text></svg>
<svg class="b" style="left:0.00px;top:0.00px;" width="768" height="409" viewBox="0 0 768 409"><defs>
<linearGradient id="gUp" gradientUnits="userSpaceOnUse" x1="567.5" y1="152.8" x2="617.7" y2="93.1">
<stop offset="0" stop-color="#0028ff"/><stop offset="0.1" stop-color="#1070ff"/><stop offset="0.226" stop-color="#18d0f8"/><stop offset="0.35" stop-color="#10e8b0"/><stop offset="0.48" stop-color="#2ce850"/><stop offset="0.71" stop-color="#50e818"/><stop offset="0.89" stop-color="#b0f000"/><stop offset="1" stop-color="#f8f000"/></linearGradient>
<linearGradient id="gLo" gradientUnits="userSpaceOnUse" x1="567.5" y1="153.2" x2="657.5" y2="260.4">
<stop offset="0" stop-color="#0020ff"/><stop offset="0.09" stop-color="#0068ff"/><stop offset="0.22" stop-color="#00e4ff"/><stop offset="0.3" stop-color="#00f090"/><stop offset="0.39" stop-color="#10f010"/><stop offset="0.49" stop-color="#a0f400"/><stop offset="0.58" stop-color="#fcf400"/><stop offset="0.635" stop-color="#ffc800"/><stop offset="0.69" stop-color="#ff9400"/><stop offset="0.78" stop-color="#ff5000"/><stop offset="0.87" stop-color="#ff1800"/><stop offset="1" stop-color="#ec0000"/></linearGradient>
<linearGradient id="gShU" gradientUnits="userSpaceOnUse" x1="596" y1="112" x2="614" y2="142"><stop offset="0" stop-color="#000" stop-opacity="0"/><stop offset="0.45" stop-color="#000" stop-opacity="0.03"/><stop offset="1" stop-color="#000" stop-opacity="0.36"/></linearGradient>
<linearGradient id="gShL" gradientUnits="userSpaceOnUse" x1="666" y1="166" x2="646" y2="218"><stop offset="0" stop-color="#000" stop-opacity="0"/><stop offset="0.35" stop-color="#000" stop-opacity="0.02"/><stop offset="0.8" stop-color="#000" stop-opacity="0.28"/><stop offset="1" stop-color="#000" stop-opacity="0.42"/></linearGradient>
<clipPath id="cUp"><path d="M567.5 152.8 L567.2 152.4 L567.1 151.9 L567.0 151.3 L567.0 150.6 L567.1 149.9 L567.2 149.1 L567.4 148.3 L567.6 147.4 L567.8 146.5 L568.1 145.7 L568.4 144.8 L568.6 144.0 L568.8 143.2 L569.1 142.4 L569.3 141.5 L569.6 140.7 L569.9 139.8 L570.2 138.9 L570.5 138.0 L571.0 137.1 L571.4 136.2 L572.0 135.3 L572.6 134.3 L573.3 133.3 L574.1 132.3 L575.0 131.2 L576.0 130.1 L577.0 129.0 L578.1 127.8 L579.3 126.7 L580.4 125.5 L581.7 124.3 L582.9 123.2 L584.2 122.1 L585.4 121.0 L586.7 120.0 L588.0 119.0 L589.3 118.0 L590.6 117.0 L592.0 116.0 L593.4 115.0 L594.8 114.1 L596.2 113.2 L597.6 112.3 L599.1 111.4 L600.5 110.6 L601.9 109.9 L603.3 109.2 L604.7 108.6 L606.2 108.0 L607.6 107.4 L609.1 106.9 L610.6 106.5 L612.1 106.1 L613.5 105.7 L614.9 105.3 L616.3 105.0 L617.6 104.7 L618.8 104.4 L620.0 104.2 L621.1 104.0 L622.1 103.8 L623.0 103.7 L624.0 103.6 L624.8 103.5 L625.6 103.5 L626.4 103.4 L627.2 103.4 L627.9 103.5 L628.6 103.5 L629.3 103.6 L630.0 103.7 L630.7 103.8 L631.4 104.0 L632.0 104.2 L632.7 104.4 L633.3 104.6 L633.9 104.9 L634.4 105.1 L634.9 105.4 L635.4 105.7 L635.9 106.0 L636.3 106.4 L636.7 106.7 L637.0 107.0 L637.4 107.4 L637.6 107.8 L637.9 108.2 L638.1 108.6 L638.2 109.0 L638.4 109.4 L638.5 109.8 L638.6 110.3 L638.7 110.8 L638.7 111.2 L638.7 111.7 L638.7 112.2 L638.7 112.7 L638.6 113.2 L638.5 113.7 L638.4 114.2 L638.2 114.8 L638.1 115.3 L637.9 115.9 L637.6 116.5 L637.4 117.1 L637.0 117.7 L636.7 118.3 L636.3 118.9 L635.9 119.6 L635.5 120.2 L635.1 120.9 L634.6 121.6 L634.1 122.3 L633.5 123.0 L632.9 123.7 L632.2 124.4 L631.6 125.2 L630.8 125.9 L630.0 126.7 L629.1 127.5 L628.2 128.3 L627.1 129.1 L626.1 130.0 L624.9 130.9 L623.8 131.8 L622.6 132.6 L621.4 133.5 L620.2 134.3 L619.0 135.2 L617.8 135.9 L616.7 136.7 L615.6 137.4 L614.5 138.1 L613.4 138.8 L612.3 139.4 L611.2 140.1 L610.1 140.7 L609.0 141.3 L607.9 141.9 L606.8 142.5 L605.6 143.1 L604.5 143.6 L603.3 144.2 L602.1 144.8 L600.9 145.3 L599.6 145.8 L598.3 146.4 L597.0 146.9 L595.7 147.4 L594.4 147.9 L593.2 148.4 L591.9 148.8 L590.7 149.2 L589.5 149.6 L588.3 150.0 L587.2 150.3 L586.0 150.6 L584.9 150.9 L583.9 151.2 L582.8 151.4 L581.7 151.7 L580.7 151.8 L579.7 152.0 L578.7 152.2 L577.8 152.3 L576.9 152.5 L576.0 152.6 L575.1 152.7 L574.3 152.9 L573.4 153.0 L572.5 153.2 L571.7 153.3 L570.9 153.4 L570.2 153.5 L569.5 153.5 L568.9 153.4 L568.3 153.3 L567.9 153.1Z"/></clipPath><clipPath id="cLo"><path d="M567.5 153.2 L567.8 153.0 L568.3 152.8 L568.8 152.6 L569.4 152.5 L570.0 152.5 L570.7 152.4 L571.4 152.4 L572.1 152.3 L572.9 152.3 L573.6 152.3 L574.3 152.2 L575.0 152.2 L575.6 152.2 L576.2 152.1 L576.8 152.1 L577.4 152.1 L578.0 152.1 L578.6 152.1 L579.2 152.0 L579.9 152.0 L580.6 152.0 L581.4 152.0 L582.3 152.0 L583.3 152.0 L584.4 152.0 L585.6 151.9 L586.9 151.9 L588.2 151.8 L589.7 151.7 L591.1 151.7 L592.6 151.6 L594.1 151.6 L595.6 151.6 L597.1 151.6 L598.6 151.6 L600.0 151.7 L601.4 151.8 L602.7 151.9 L604.1 152.1 L605.4 152.2 L606.8 152.4 L608.1 152.6 L609.5 152.8 L610.9 153.0 L612.3 153.3 L613.7 153.6 L615.2 153.9 L616.7 154.2 L618.3 154.6 L619.9 155.0 L621.5 155.5 L623.2 155.9 L625.0 156.5 L626.7 157.0 L628.4 157.5 L630.2 158.1 L631.9 158.6 L633.5 159.1 L635.1 159.6 L636.7 160.0 L638.2 160.4 L639.7 160.8 L641.1 161.1 L642.5 161.4 L643.9 161.7 L645.2 162.0 L646.5 162.4 L647.9 162.7 L649.2 163.0 L650.6 163.4 L651.9 163.8 L653.3 164.2 L654.7 164.7 L656.1 165.1 L657.5 165.6 L658.9 166.2 L660.3 166.7 L661.6 167.2 L663.0 167.8 L664.4 168.4 L665.8 169.0 L667.2 169.6 L668.6 170.2 L670.0 170.8 L671.4 171.4 L672.8 172.1 L674.3 172.8 L675.7 173.5 L677.1 174.2 L678.6 174.9 L680.0 175.6 L681.4 176.3 L682.8 177.1 L684.1 177.8 L685.4 178.5 L686.7 179.2 L687.9 179.9 L689.2 180.6 L690.3 181.3 L691.5 182.0 L692.6 182.7 L693.8 183.4 L694.9 184.0 L695.9 184.7 L697.0 185.4 L698.0 186.1 L699.0 186.8 L700.0 187.5 L701.0 188.2 L701.9 188.9 L702.8 189.6 L703.8 190.3 L704.7 191.0 L705.5 191.6 L706.4 192.3 L707.2 193.0 L707.9 193.7 L708.7 194.4 L709.4 195.1 L710.0 195.8 L710.6 196.5 L711.2 197.2 L711.7 197.9 L712.2 198.6 L712.6 199.3 L713.1 200.1 L713.4 200.8 L713.8 201.5 L714.1 202.2 L714.4 202.9 L714.7 203.5 L715.0 204.2 L715.2 204.9 L715.5 205.5 L715.6 206.2 L715.8 206.8 L715.9 207.4 L716.0 208.1 L716.1 208.7 L716.2 209.3 L716.2 209.9 L716.2 210.5 L716.2 211.1 L716.2 211.7 L716.2 212.3 L716.1 212.9 L716.0 213.5 L715.9 214.0 L715.8 214.6 L715.6 215.2 L715.5 215.7 L715.3 216.3 L715.0 216.8 L714.8 217.3 L714.5 217.8 L714.2 218.3 L713.9 218.8 L713.5 219.3 L713.1 219.7 L712.7 220.2 L712.2 220.6 L711.8 221.1 L711.2 221.5 L710.7 221.9 L710.2 222.3 L709.6 222.7 L708.9 223.0 L708.3 223.3 L707.6 223.6 L706.9 223.8 L706.1 224.1 L705.3 224.3 L704.5 224.5 L703.7 224.6 L702.8 224.8 L701.9 224.9 L701.0 225.0 L700.1 225.1 L699.2 225.2 L698.3 225.3 L697.4 225.4 L696.5 225.4 L695.6 225.5 L694.7 225.5 L693.8 225.5 L692.9 225.5 L692.0 225.5 L691.0 225.4 L690.0 225.3 L688.9 225.3 L687.9 225.1 L686.7 225.0 L685.5 224.8 L684.2 224.6 L682.9 224.4 L681.5 224.2 L680.1 223.9 L678.7 223.6 L677.2 223.3 L675.8 223.0 L674.3 222.7 L672.8 222.4 L671.4 222.0 L670.0 221.7 L668.6 221.3 L667.2 221.0 L665.8 220.6 L664.4 220.2 L663.0 219.8 L661.6 219.4 L660.3 219.0 L658.9 218.6 L657.5 218.1 L656.1 217.7 L654.7 217.2 L653.3 216.7 L651.9 216.2 L650.5 215.7 L649.1 215.1 L647.8 214.6 L646.4 214.0 L645.0 213.4 L643.6 212.9 L642.2 212.3 L640.9 211.7 L639.5 211.1 L638.1 210.6 L636.7 210.0 L635.3 209.4 L633.9 208.9 L632.4 208.3 L631.0 207.7 L629.5 207.2 L628.0 206.6 L626.6 206.1 L625.2 205.5 L623.8 205.0 L622.5 204.5 L621.2 204.0 L620.0 203.5 L618.9 203.1 L617.8 202.7 L616.8 202.3 L615.9 202.0 L614.9 201.7 L614.0 201.4 L613.2 201.1 L612.3 200.8 L611.3 200.4 L610.4 200.0 L609.4 199.5 L608.3 199.0 L607.1 198.4 L605.9 197.8 L604.7 197.1 L603.4 196.3 L602.0 195.5 L600.7 194.7 L599.4 193.9 L598.1 193.1 L596.8 192.3 L595.5 191.5 L594.4 190.7 L593.3 190.0 L592.3 189.3 L591.3 188.6 L590.4 188.0 L589.6 187.4 L588.8 186.8 L588.0 186.1 L587.2 185.5 L586.4 184.8 L585.7 184.1 L584.9 183.4 L584.1 182.6 L583.3 181.7 L582.5 180.8 L581.6 179.7 L580.7 178.6 L579.8 177.5 L578.9 176.3 L578.0 175.1 L577.1 173.9 L576.3 172.7 L575.4 171.5 L574.7 170.4 L574.0 169.3 L573.3 168.3 L572.7 167.3 L572.1 166.4 L571.6 165.4 L571.1 164.5 L570.6 163.6 L570.2 162.8 L569.8 161.9 L569.5 161.1 L569.1 160.4 L568.8 159.6 L568.6 159.0 L568.3 158.3 L568.1 157.7 L567.8 157.1 L567.6 156.6 L567.4 156.1 L567.2 155.6 L567.1 155.2 L567.0 154.8 L567.0 154.4 L567.0 154.1 L567.1 153.8 L567.3 153.5Z"/></clipPath>
<clipPath id="cWin"><rect x="426" y="43.7" width="342" height="240.3"/></clipPath>
</defs>
<g clip-path="url(#cWin)">
<path d="M420 186.9L675.8 84.5M439.8 204.2L696.3 101.2" stroke="#0a0a0a" stroke-width="1.15" fill="none"/>
<ellipse cx="547.4" cy="135.8" rx="4.4" ry="2.9" fill="#000"/>
<path d="M567.5 152.8 L567.2 152.4 L567.1 151.9 L567.0 151.3 L567.0 150.6 L567.1 149.9 L567.2 149.1 L567.4 148.3 L567.6 147.4 L567.8 146.5 L568.1 145.7 L568.4 144.8 L568.6 144.0 L568.8 143.2 L569.1 142.4 L569.3 141.5 L569.6 140.7 L569.9 139.8 L570.2 138.9 L570.5 138.0 L571.0 137.1 L571.4 136.2 L572.0 135.3 L572.6 134.3 L573.3 133.3 L574.1 132.3 L575.0 131.2 L576.0 130.1 L577.0 129.0 L578.1 127.8 L579.3 126.7 L580.4 125.5 L581.7 124.3 L582.9 123.2 L584.2 122.1 L585.4 121.0 L586.7 120.0 L588.0 119.0 L589.3 118.0 L590.6 117.0 L592.0 116.0 L593.4 115.0 L594.8 114.1 L596.2 113.2 L597.6 112.3 L599.1 111.4 L600.5 110.6 L601.9 109.9 L603.3 109.2 L604.7 108.6 L606.2 108.0 L607.6 107.4 L609.1 106.9 L610.6 106.5 L612.1 106.1 L613.5 105.7 L614.9 105.3 L616.3 105.0 L617.6 104.7 L618.8 104.4 L620.0 104.2 L621.1 104.0 L622.1 103.8 L623.0 103.7 L624.0 103.6 L624.8 103.5 L625.6 103.5 L626.4 103.4 L627.2 103.4 L627.9 103.5 L628.6 103.5 L629.3 103.6 L630.0 103.7 L630.7 103.8 L631.4 104.0 L632.0 104.2 L632.7 104.4 L633.3 104.6 L633.9 104.9 L634.4 105.1 L634.9 105.4 L635.4 105.7 L635.9 106.0 L636.3 106.4 L636.7 106.7 L637.0 107.0 L637.4 107.4 L637.6 107.8 L637.9 108.2 L638.1 108.6 L638.2 109.0 L638.4 109.4 L638.5 109.8 L638.6 110.3 L638.7 110.8 L638.7 111.2 L638.7 111.7 L638.7 112.2 L638.7 112.7 L638.6 113.2 L638.5 113.7 L638.4 114.2 L638.2 114.8 L638.1 115.3 L637.9 115.9 L637.6 116.5 L637.4 117.1 L637.0 117.7 L636.7 118.3 L636.3 118.9 L635.9 119.6 L635.5 120.2 L635.1 120.9 L634.6 121.6 L634.1 122.3 L633.5 123.0 L632.9 123.7 L632.2 124.4 L631.6 125.2 L630.8 125.9 L630.0 126.7 L629.1 127.5 L628.2 128.3 L627.1 129.1 L626.1 130.0 L624.9 130.9 L623.8 131.8 L622.6 132.6 L621.4 133.5 L620.2 134.3 L619.0 135.2 L617.8 135.9 L616.7 136.7 L615.6 137.4 L614.5 138.1 L613.4 138.8 L612.3 139.4 L611.2 140.1 L610.1 140.7 L609.0 141.3 L607.9 141.9 L606.8 142.5 L605.6 143.1 L604.5 143.6 L603.3 144.2 L602.1 144.8 L600.9 145.3 L599.6 145.8 L598.3 146.4 L597.0 146.9 L595.7 147.4 L594.4 147.9 L593.2 148.4 L591.9 148.8 L590.7 149.2 L589.5 149.6 L588.3 150.0 L587.2 150.3 L586.0 150.6 L584.9 150.9 L583.9 151.2 L582.8 151.4 L581.7 151.7 L580.7 151.8 L579.7 152.0 L578.7 152.2 L577.8 152.3 L576.9 152.5 L576.0 152.6 L575.1 152.7 L574.3 152.9 L573.4 153.0 L572.5 153.2 L571.7 153.3 L570.9 153.4 L570.2 153.5 L569.5 153.5 L568.9 153.4 L568.3 153.3 L567.9 153.1Z" fill="url(#gUp)"/><path d="M567.5 152.8 L567.2 152.4 L567.1 151.9 L567.0 151.3 L567.0 150.6 L567.1 149.9 L567.2 149.1 L567.4 148.3 L567.6 147.4 L567.8 146.5 L568.1 145.7 L568.4 144.8 L568.6 144.0 L568.8 143.2 L569.1 142.4 L569.3 141.5 L569.6 140.7 L569.9 139.8 L570.2 138.9 L570.5 138.0 L571.0 137.1 L571.4 136.2 L572.0 135.3 L572.6 134.3 L573.3 133.3 L574.1 132.3 L575.0 131.2 L576.0 130.1 L577.0 129.0 L578.1 127.8 L579.3 126.7 L580.4 125.5 L581.7 124.3 L582.9 123.2 L584.2 122.1 L585.4 121.0 L586.7 120.0 L588.0 119.0 L589.3 118.0 L590.6 117.0 L592.0 116.0 L593.4 115.0 L594.8 114.1 L596.2 113.2 L597.6 112.3 L599.1 111.4 L600.5 110.6 L601.9 109.9 L603.3 109.2 L604.7 108.6 L606.2 108.0 L607.6 107.4 L609.1 106.9 L610.6 106.5 L612.1 106.1 L613.5 105.7 L614.9 105.3 L616.3 105.0 L617.6 104.7 L618.8 104.4 L620.0 104.2 L621.1 104.0 L622.1 103.8 L623.0 103.7 L624.0 103.6 L624.8 103.5 L625.6 103.5 L626.4 103.4 L627.2 103.4 L627.9 103.5 L628.6 103.5 L629.3 103.6 L630.0 103.7 L630.7 103.8 L631.4 104.0 L632.0 104.2 L632.7 104.4 L633.3 104.6 L633.9 104.9 L634.4 105.1 L634.9 105.4 L635.4 105.7 L635.9 106.0 L636.3 106.4 L636.7 106.7 L637.0 107.0 L637.4 107.4 L637.6 107.8 L637.9 108.2 L638.1 108.6 L638.2 109.0 L638.4 109.4 L638.5 109.8 L638.6 110.3 L638.7 110.8 L638.7 111.2 L638.7 111.7 L638.7 112.2 L638.7 112.7 L638.6 113.2 L638.5 113.7 L638.4 114.2 L638.2 114.8 L638.1 115.3 L637.9 115.9 L637.6 116.5 L637.4 117.1 L637.0 117.7 L636.7 118.3 L636.3 118.9 L635.9 119.6 L635.5 120.2 L635.1 120.9 L634.6 121.6 L634.1 122.3 L633.5 123.0 L632.9 123.7 L632.2 124.4 L631.6 125.2 L630.8 125.9 L630.0 126.7 L629.1 127.5 L628.2 128.3 L627.1 129.1 L626.1 130.0 L624.9 130.9 L623.8 131.8 L622.6 132.6 L621.4 133.5 L620.2 134.3 L619.0 135.2 L617.8 135.9 L616.7 136.7 L615.6 137.4 L614.5 138.1 L613.4 138.8 L612.3 139.4 L611.2 140.1 L610.1 140.7 L609.0 141.3 L607.9 141.9 L606.8 142.5 L605.6 143.1 L604.5 143.6 L603.3 144.2 L602.1 144.8 L600.9 145.3 L599.6 145.8 L598.3 146.4 L597.0 146.9 L595.7 147.4 L594.4 147.9 L593.2 148.4 L591.9 148.8 L590.7 149.2 L589.5 149.6 L588.3 150.0 L587.2 150.3 L586.0 150.6 L584.9 150.9 L583.9 151.2 L582.8 151.4 L581.7 151.7 L580.7 151.8 L579.7 152.0 L578.7 152.2 L577.8 152.3 L576.9 152.5 L576.0 152.6 L575.1 152.7 L574.3 152.9 L573.4 153.0 L572.5 153.2 L571.7 153.3 L570.9 153.4 L570.2 153.5 L569.5 153.5 L568.9 153.4 L568.3 153.3 L567.9 153.1Z" fill="url(#gShU)"/>
<path d="M570.1 153.8 L572.2 153.4 L574.4 153.1 L576.5 152.7 L578.6 152.2 L580.7 151.7 L582.7 151.1 L584.6 150.4 L586.5 149.7 L588.4 148.8 L590.2 147.8 L591.9 146.8 L593.6 145.7 L595.3 144.5 L596.9 143.3 L598.5 142.1 L600.0 140.7 L601.6 139.3 L603.0 137.9 L604.5 136.4 L605.9 134.9 L607.3 133.3 L608.7 131.7 L610.1 130.0 L611.4 128.4 L612.8 126.7 L614.2 125.1 L615.5 123.4 L616.9 121.8 L618.3 120.3 L619.8 118.7 L621.2 117.2 L622.7 115.8 L624.2 114.3 L625.7 112.9 L627.2 111.5 L628.8 110.2 L630.4 109.0 L632.1 108.0 L634.0 107.2 L636.2 106.9 M569.9 153.5 L571.9 153.0 L573.9 152.4 L575.9 151.7 L577.8 151.0 L579.7 150.2 L581.5 149.3 L583.3 148.3 L585.0 147.2 L586.7 146.1 L588.3 144.8 L589.9 143.5 L591.4 142.2 L592.9 140.8 L594.4 139.3 L595.9 137.8 L597.3 136.3 L598.7 134.7 L600.1 133.1 L601.4 131.4 L602.8 129.8 L604.1 128.1 L605.5 126.4 L606.8 124.7 L608.1 123.0 L609.5 121.3 L610.9 119.7 L612.3 118.2 L613.7 116.6 L615.2 115.2 L616.7 113.8 L618.3 112.5 L619.9 111.3 L621.5 110.1 L623.2 108.9 L624.9 107.8 L626.7 106.9 L628.6 106.0 L630.6 105.5 L632.8 105.3 L635.5 105.8 M569.5 152.8 L571.3 151.9 L573.1 151.0 L574.8 149.9 L576.5 148.8 L578.1 147.6 L579.7 146.3 L581.3 145.0 L582.8 143.7 L584.3 142.3 L585.8 140.8 L587.2 139.2 L588.7 137.7 L590.0 136.1 L591.4 134.4 L592.8 132.8 L594.1 131.1 L595.4 129.4 L596.8 127.7 L598.1 126.0 L599.4 124.3 L600.8 122.7 L602.1 121.0 L603.5 119.4 L604.9 117.8 L606.3 116.2 L607.8 114.7 L609.3 113.3 L610.8 112.0 L612.5 110.8 L614.1 109.6 L615.9 108.6 L617.6 107.6 L619.4 106.7 L621.3 105.8 L623.2 105.0 L625.2 104.4 L627.3 104.0 L629.6 103.8 L632.1 104.0 L635.1 105.0 M568.9 151.9 L570.4 150.5 L571.9 149.1 L573.3 147.5 L574.7 145.9 L576.1 144.4 L577.6 142.8 L579.0 141.2 L580.3 139.6 L581.7 138.0 L583.1 136.3 L584.4 134.6 L585.7 132.9 L587.1 131.2 L588.4 129.5 L589.7 127.8 L591.0 126.1 L592.4 124.4 L593.7 122.8 L595.1 121.2 L596.5 119.5 L597.9 118.0 L599.3 116.4 L600.8 115.0 L602.3 113.5 L603.8 112.2 L605.4 110.9 L607.1 109.7 L608.8 108.7 L610.6 107.7 L612.4 106.8 L614.3 106.1 L616.3 105.4 L618.3 104.7 L620.3 104.2 L622.3 103.7 L624.5 103.3 L626.7 103.1 M568.2 150.8 L569.5 149.0 L570.7 147.0 L571.8 145.0 L572.9 143.0 L574.1 141.1 L575.4 139.3 L576.7 137.5 L578.0 135.8 L579.3 134.0 L580.6 132.3 L581.9 130.5 L583.2 128.8 L584.5 127.1 L585.9 125.5 L587.2 123.8 L588.6 122.2 L590.0 120.6 L591.5 119.1 L592.9 117.6 L594.4 116.2 L595.9 114.8 L597.5 113.5 L599.1 112.3 L600.8 111.1 L602.5 110.0 L604.2 108.9 L606.0 108.0 L607.9 107.2 M567.6 149.8 L568.6 147.5 L569.5 145.2 L570.4 142.8 L571.4 140.5 L572.5 138.4 L573.6 136.4 L574.8 134.6 L576.1 132.7 L577.4 131.0 L578.7 129.3 L580.1 127.6 L581.5 126.0 L582.8 124.4 L584.3 122.9 L585.7 121.4 L587.2 120.0 L588.8 118.6 L590.4 117.3 L592.0 116.1 L593.6 114.9 M567.1 149.0 L567.9 146.4 L568.7 143.9 L569.5 141.3 L570.4 138.9 L571.4 136.7 L572.5 134.7 L573.8 132.9 L575.1 131.1 L576.5 129.5 L577.9 127.9 L579.3 126.4 M566.9 148.6 L567.6 145.9 L568.4 143.3 L569.1 140.7 M634.0 122.6 L635.3 120.9 L636.5 118.9 L637.6 116.9 L638.6 114.6 L639.1 111.6 M620.0 134.5 L621.6 133.3 L623.2 132.0 L624.8 130.7 L626.3 129.4 L627.8 128.0 L629.3 126.5 L630.7 125.0 L632.1 123.3 L633.4 121.5 L634.6 119.7 L635.8 117.7 L636.9 115.7 L637.9 113.5 L638.7 110.9 M604.3 143.8 L606.1 142.8 L607.9 141.8 L609.6 140.8 L611.3 139.6 L612.9 138.4 L614.5 137.2 L616.1 135.9 L617.6 134.6 L619.1 133.2 L620.6 131.7 L622.1 130.3 L623.6 128.8 L625.0 127.2 L626.4 125.7 L627.8 124.1 L629.2 122.5 L630.5 120.8 L631.8 119.0 L633.1 117.2 L634.3 115.4 L635.6 113.6 L636.8 111.7 L638.0 109.7 M589.1 149.9 L591.0 149.2 L592.9 148.4 L594.8 147.6 L596.6 146.7 L598.4 145.8 L600.2 144.8 L601.9 143.7 L603.5 142.5 L605.2 141.3 L606.8 140.1 L608.3 138.8 L609.9 137.4 L611.3 135.9 L612.8 134.5 L614.3 132.9 L615.7 131.4 L617.1 129.8 L618.5 128.2 L619.9 126.6 L621.3 125.1 L622.7 123.5 L624.1 121.9 L625.5 120.3 L626.9 118.7 L628.3 117.1 L629.6 115.5 L631.0 113.9 L632.4 112.3 L633.9 110.9 L635.5 109.5 L637.1 108.3 M570.0 153.6 L572.1 153.3 L574.3 152.9 L576.5 152.6 L578.7 152.3 L580.8 152.0 L583.0 151.6 L585.0 151.1 M569.6 153.0 L571.6 152.4 L573.7 152.0 L575.8 151.5 L578.0 151.2 L580.1 150.8 L582.3 150.5 L584.5 150.1 L586.6 149.7 L588.7 149.2 L590.7 148.7 L592.7 148.2 L594.8 147.6 L596.7 146.9 L598.7 146.2 L600.6 145.5 L602.5 144.7 M569.0 152.1 L570.8 151.2 L572.7 150.3 L574.6 149.6 L576.7 149.1 L578.7 148.6 L580.9 148.1 L583.0 147.8 L585.1 147.4 L587.2 146.9 L589.4 146.5 L591.5 146.1 L593.6 145.6 L595.6 145.1 L597.7 144.6 L599.7 144.1 L601.7 143.5 L603.7 142.8 L605.7 142.1 L607.6 141.4 L609.5 140.6 L611.3 139.7 L613.1 138.8 L614.9 137.8 L616.6 136.7 M568.4 151.0 L569.9 149.6 L571.5 148.4 L573.2 147.2 L575.0 146.3 L576.9 145.5 L578.8 144.9 L580.9 144.4 L583.0 143.8 L585.0 143.4 L587.1 142.9 L589.2 142.5 L591.4 142.1 L593.5 141.6 L595.6 141.2 L597.7 140.8 L599.8 140.3 L601.9 139.8 L603.9 139.3 L606.0 138.8 L608.0 138.2 L610.0 137.5 L611.9 136.9 L613.8 136.1 L615.7 135.3 L617.6 134.5 L619.4 133.6 L621.2 132.7 L623.0 131.7 L624.7 130.6 L626.4 129.5 L628.1 128.3 L629.7 127.1 L631.2 125.7 M567.7 150.0 L568.9 148.1 L570.2 146.4 L571.6 144.7 L573.1 143.4 L574.8 142.2 L576.6 141.3 L578.5 140.5 L580.5 139.8 L582.4 139.2 L584.5 138.6 L586.5 138.0 L588.6 137.5 L590.6 137.1 L592.8 136.6 L594.9 136.2 L597.0 135.8 L599.1 135.3 L601.2 134.9 L603.3 134.5 L605.4 134.0 L607.5 133.5 L609.6 133.0 L611.6 132.5 L613.6 131.9 L615.6 131.3 L617.6 130.7 L619.6 130.0 L621.5 129.3 L623.4 128.5 L625.3 127.6 L627.1 126.7 L628.8 125.7 L630.5 124.7 L632.2 123.4 L633.7 122.0 L635.1 120.5 L636.4 118.8 L637.6 116.9 L638.6 114.7 L639.2 111.7 M567.2 149.1 L568.2 146.8 L569.2 144.7 L570.3 142.6 L571.6 140.8 L573.0 139.3 L574.6 138.0 L576.3 136.9 L578.1 135.9 L579.9 135.0 L581.8 134.2 L583.7 133.5 L585.7 132.8 L587.6 132.2 L589.7 131.6 L591.7 131.1 L593.8 130.6 L595.9 130.1 L598.0 129.7 L600.1 129.2 L602.2 128.8 L604.3 128.4 L606.4 127.9 L608.5 127.5 L610.6 127.1 L612.7 126.6 L614.8 126.2 L616.9 125.7 L619.0 125.2 L621.0 124.6 L623.0 124.1 L625.0 123.4 L627.0 122.7 L628.9 121.9 L630.7 121.0 L632.4 119.9 L634.0 118.7 L635.5 117.3 L636.9 115.7 L638.1 113.8 L638.9 111.2 M566.9 148.6 L567.7 146.1 L568.5 143.6 L569.4 141.2 L570.5 139.0 L571.7 137.1 L573.1 135.5 L574.6 134.1 L576.2 132.9 L577.8 131.7 L579.5 130.6 L581.3 129.6 L583.1 128.7 L585.0 127.8 L586.9 127.1 L588.8 126.3 L590.8 125.7 L592.7 125.0 L594.8 124.5 L596.8 123.9 L598.9 123.4 L601.0 122.9 L603.1 122.5 L605.2 122.1 L607.3 121.6 L609.4 121.2 L611.6 120.9 L613.7 120.5 L615.9 120.1 L618.0 119.8 L620.2 119.4 L622.3 119.0 L624.4 118.5 L626.4 118.0 L628.4 117.4 L630.3 116.6 L632.2 115.7 L633.9 114.7 L635.6 113.6 L637.1 112.2 L638.3 110.3 M570.0 138.3 L571.1 136.2 L572.4 134.4 L573.7 132.7 L575.1 131.2 L576.6 129.8 L578.2 128.4 L579.8 127.2 L581.4 125.9 L583.1 124.8 L584.8 123.8 L586.6 122.8 L588.4 121.9 L590.3 121.0 L592.2 120.2 L594.1 119.5 L596.0 118.8 L598.0 118.2 L600.0 117.6 L602.1 117.1 L604.2 116.6 L606.3 116.1 L608.4 115.7 L610.5 115.4 L612.7 115.0 L614.9 114.8 L617.1 114.5 L619.3 114.2 L621.5 113.9 L623.7 113.6 L625.8 113.2 L627.9 112.7 L629.9 112.1 L631.9 111.5 L633.9 110.8 L635.8 110.0 L637.5 109.0 M582.3 123.6 L583.9 122.3 L585.5 121.0 L587.2 119.9 L588.9 118.7 L590.6 117.7 L592.4 116.7 L594.2 115.8 L596.0 114.9 L597.9 114.1 L599.8 113.4 L601.8 112.7 L603.8 112.1 L605.8 111.6 L607.9 111.1 L610.1 110.7 L612.2 110.4 L614.4 110.1 L616.7 109.9 L618.9 109.7 L621.1 109.4 L623.4 109.2 L625.5 108.8 L627.7 108.5 L629.9 108.2 L632.1 108.0 L634.3 107.7 L636.6 107.5 M597.0 112.7 L598.8 111.7 L600.6 110.8 L602.4 109.9 L604.3 109.2 L606.3 108.5 L608.4 108.0 L610.5 107.5 L612.6 107.1 L614.8 106.8 L617.0 106.5 L619.2 106.2 L621.4 106.0 L623.6 105.7 L625.9 105.6 L628.2 105.4 L630.6 105.5 L633.1 105.6 L635.8 106.2 M611.9 105.9 L613.9 105.4 L616.0 105.0 L618.2 104.6 L620.3 104.2 L622.5 103.9 L624.7 103.7 L627.1 103.6 L629.6 103.8 L632.2 104.2 L635.2 105.3 M631.8 103.6 L635.0 104.9" stroke="#e8ffc0" stroke-opacity="0.5" stroke-width="0.42" fill="none" clip-path="url(#cUp)"/>
<path d="M567.5 153.2 L567.8 153.0 L568.3 152.8 L568.8 152.6 L569.4 152.5 L570.0 152.5 L570.7 152.4 L571.4 152.4 L572.1 152.3 L572.9 152.3 L573.6 152.3 L574.3 152.2 L575.0 152.2 L575.6 152.2 L576.2 152.1 L576.8 152.1 L577.4 152.1 L578.0 152.1 L578.6 152.1 L579.2 152.0 L579.9 152.0 L580.6 152.0 L581.4 152.0 L582.3 152.0 L583.3 152.0 L584.4 152.0 L585.6 151.9 L586.9 151.9 L588.2 151.8 L589.7 151.7 L591.1 151.7 L592.6 151.6 L594.1 151.6 L595.6 151.6 L597.1 151.6 L598.6 151.6 L600.0 151.7 L601.4 151.8 L602.7 151.9 L604.1 152.1 L605.4 152.2 L606.8 152.4 L608.1 152.6 L609.5 152.8 L610.9 153.0 L612.3 153.3 L613.7 153.6 L615.2 153.9 L616.7 154.2 L618.3 154.6 L619.9 155.0 L621.5 155.5 L623.2 155.9 L625.0 156.5 L626.7 157.0 L628.4 157.5 L630.2 158.1 L631.9 158.6 L633.5 159.1 L635.1 159.6 L636.7 160.0 L638.2 160.4 L639.7 160.8 L641.1 161.1 L642.5 161.4 L643.9 161.7 L645.2 162.0 L646.5 162.4 L647.9 162.7 L649.2 163.0 L650.6 163.4 L651.9 163.8 L653.3 164.2 L654.7 164.7 L656.1 165.1 L657.5 165.6 L658.9 166.2 L660.3 166.7 L661.6 167.2 L663.0 167.8 L664.4 168.4 L665.8 169.0 L667.2 169.6 L668.6 170.2 L670.0 170.8 L671.4 171.4 L672.8 172.1 L674.3 172.8 L675.7 173.5 L677.1 174.2 L678.6 174.9 L680.0 175.6 L681.4 176.3 L682.8 177.1 L684.1 177.8 L685.4 178.5 L686.7 179.2 L687.9 179.9 L689.2 180.6 L690.3 181.3 L691.5 182.0 L692.6 182.7 L693.8 183.4 L694.9 184.0 L695.9 184.7 L697.0 185.4 L698.0 186.1 L699.0 186.8 L700.0 187.5 L701.0 188.2 L701.9 188.9 L702.8 189.6 L703.8 190.3 L704.7 191.0 L705.5 191.6 L706.4 192.3 L707.2 193.0 L707.9 193.7 L708.7 194.4 L709.4 195.1 L710.0 195.8 L710.6 196.5 L711.2 197.2 L711.7 197.9 L712.2 198.6 L712.6 199.3 L713.1 200.1 L713.4 200.8 L713.8 201.5 L714.1 202.2 L714.4 202.9 L714.7 203.5 L715.0 204.2 L715.2 204.9 L715.5 205.5 L715.6 206.2 L715.8 206.8 L715.9 207.4 L716.0 208.1 L716.1 208.7 L716.2 209.3 L716.2 209.9 L716.2 210.5 L716.2 211.1 L716.2 211.7 L716.2 212.3 L716.1 212.9 L716.0 213.5 L715.9 214.0 L715.8 214.6 L715.6 215.2 L715.5 215.7 L715.3 216.3 L715.0 216.8 L714.8 217.3 L714.5 217.8 L714.2 218.3 L713.9 218.8 L713.5 219.3 L713.1 219.7 L712.7 220.2 L712.2 220.6 L711.8 221.1 L711.2 221.5 L710.7 221.9 L710.2 222.3 L709.6 222.7 L708.9 223.0 L708.3 223.3 L707.6 223.6 L706.9 223.8 L706.1 224.1 L705.3 224.3 L704.5 224.5 L703.7 224.6 L702.8 224.8 L701.9 224.9 L701.0 225.0 L700.1 225.1 L699.2 225.2 L698.3 225.3 L697.4 225.4 L696.5 225.4 L695.6 225.5 L694.7 225.5 L693.8 225.5 L692.9 225.5 L692.0 225.5 L691.0 225.4 L690.0 225.3 L688.9 225.3 L687.9 225.1 L686.7 225.0 L685.5 224.8 L684.2 224.6 L682.9 224.4 L681.5 224.2 L680.1 223.9 L678.7 223.6 L677.2 223.3 L675.8 223.0 L674.3 222.7 L672.8 222.4 L671.4 222.0 L670.0 221.7 L668.6 221.3 L667.2 221.0 L665.8 220.6 L664.4 220.2 L663.0 219.8 L661.6 219.4 L660.3 219.0 L658.9 218.6 L657.5 218.1 L656.1 217.7 L654.7 217.2 L653.3 216.7 L651.9 216.2 L650.5 215.7 L649.1 215.1 L647.8 214.6 L646.4 214.0 L645.0 213.4 L643.6 212.9 L642.2 212.3 L640.9 211.7 L639.5 211.1 L638.1 210.6 L636.7 210.0 L635.3 209.4 L633.9 208.9 L632.4 208.3 L631.0 207.7 L629.5 207.2 L628.0 206.6 L626.6 206.1 L625.2 205.5 L623.8 205.0 L622.5 204.5 L621.2 204.0 L620.0 203.5 L618.9 203.1 L617.8 202.7 L616.8 202.3 L615.9 202.0 L614.9 201.7 L614.0 201.4 L613.2 201.1 L612.3 200.8 L611.3 200.4 L610.4 200.0 L609.4 199.5 L608.3 199.0 L607.1 198.4 L605.9 197.8 L604.7 197.1 L603.4 196.3 L602.0 195.5 L600.7 194.7 L599.4 193.9 L598.1 193.1 L596.8 192.3 L595.5 191.5 L594.4 190.7 L593.3 190.0 L592.3 189.3 L591.3 188.6 L590.4 188.0 L589.6 187.4 L588.8 186.8 L588.0 186.1 L587.2 185.5 L586.4 184.8 L585.7 184.1 L584.9 183.4 L584.1 182.6 L583.3 181.7 L582.5 180.8 L581.6 179.7 L580.7 178.6 L579.8 177.5 L578.9 176.3 L578.0 175.1 L577.1 173.9 L576.3 172.7 L575.4 171.5 L574.7 170.4 L574.0 169.3 L573.3 168.3 L572.7 167.3 L572.1 166.4 L571.6 165.4 L571.1 164.5 L570.6 163.6 L570.2 162.8 L569.8 161.9 L569.5 161.1 L569.1 160.4 L568.8 159.6 L568.6 159.0 L568.3 158.3 L568.1 157.7 L567.8 157.1 L567.6 156.6 L567.4 156.1 L567.2 155.6 L567.1 155.2 L567.0 154.8 L567.0 154.4 L567.0 154.1 L567.1 153.8 L567.3 153.5Z" fill="url(#gLo)"/><path d="M567.5 153.2 L567.8 153.0 L568.3 152.8 L568.8 152.6 L569.4 152.5 L570.0 152.5 L570.7 152.4 L571.4 152.4 L572.1 152.3 L572.9 152.3 L573.6 152.3 L574.3 152.2 L575.0 152.2 L575.6 152.2 L576.2 152.1 L576.8 152.1 L577.4 152.1 L578.0 152.1 L578.6 152.1 L579.2 152.0 L579.9 152.0 L580.6 152.0 L581.4 152.0 L582.3 152.0 L583.3 152.0 L584.4 152.0 L585.6 151.9 L586.9 151.9 L588.2 151.8 L589.7 151.7 L591.1 151.7 L592.6 151.6 L594.1 151.6 L595.6 151.6 L597.1 151.6 L598.6 151.6 L600.0 151.7 L601.4 151.8 L602.7 151.9 L604.1 152.1 L605.4 152.2 L606.8 152.4 L608.1 152.6 L609.5 152.8 L610.9 153.0 L612.3 153.3 L613.7 153.6 L615.2 153.9 L616.7 154.2 L618.3 154.6 L619.9 155.0 L621.5 155.5 L623.2 155.9 L625.0 156.5 L626.7 157.0 L628.4 157.5 L630.2 158.1 L631.9 158.6 L633.5 159.1 L635.1 159.6 L636.7 160.0 L638.2 160.4 L639.7 160.8 L641.1 161.1 L642.5 161.4 L643.9 161.7 L645.2 162.0 L646.5 162.4 L647.9 162.7 L649.2 163.0 L650.6 163.4 L651.9 163.8 L653.3 164.2 L654.7 164.7 L656.1 165.1 L657.5 165.6 L658.9 166.2 L660.3 166.7 L661.6 167.2 L663.0 167.8 L664.4 168.4 L665.8 169.0 L667.2 169.6 L668.6 170.2 L670.0 170.8 L671.4 171.4 L672.8 172.1 L674.3 172.8 L675.7 173.5 L677.1 174.2 L678.6 174.9 L680.0 175.6 L681.4 176.3 L682.8 177.1 L684.1 177.8 L685.4 178.5 L686.7 179.2 L687.9 179.9 L689.2 180.6 L690.3 181.3 L691.5 182.0 L692.6 182.7 L693.8 183.4 L694.9 184.0 L695.9 184.7 L697.0 185.4 L698.0 186.1 L699.0 186.8 L700.0 187.5 L701.0 188.2 L701.9 188.9 L702.8 189.6 L703.8 190.3 L704.7 191.0 L705.5 191.6 L706.4 192.3 L707.2 193.0 L707.9 193.7 L708.7 194.4 L709.4 195.1 L710.0 195.8 L710.6 196.5 L711.2 197.2 L711.7 197.9 L712.2 198.6 L712.6 199.3 L713.1 200.1 L713.4 200.8 L713.8 201.5 L714.1 202.2 L714.4 202.9 L714.7 203.5 L715.0 204.2 L715.2 204.9 L715.5 205.5 L715.6 206.2 L715.8 206.8 L715.9 207.4 L716.0 208.1 L716.1 208.7 L716.2 209.3 L716.2 209.9 L716.2 210.5 L716.2 211.1 L716.2 211.7 L716.2 212.3 L716.1 212.9 L716.0 213.5 L715.9 214.0 L715.8 214.6 L715.6 215.2 L715.5 215.7 L715.3 216.3 L715.0 216.8 L714.8 217.3 L714.5 217.8 L714.2 218.3 L713.9 218.8 L713.5 219.3 L713.1 219.7 L712.7 220.2 L712.2 220.6 L711.8 221.1 L711.2 221.5 L710.7 221.9 L710.2 222.3 L709.6 222.7 L708.9 223.0 L708.3 223.3 L707.6 223.6 L706.9 223.8 L706.1 224.1 L705.3 224.3 L704.5 224.5 L703.7 224.6 L702.8 224.8 L701.9 224.9 L701.0 225.0 L700.1 225.1 L699.2 225.2 L698.3 225.3 L697.4 225.4 L696.5 225.4 L695.6 225.5 L694.7 225.5 L693.8 225.5 L692.9 225.5 L692.0 225.5 L691.0 225.4 L690.0 225.3 L688.9 225.3 L687.9 225.1 L686.7 225.0 L685.5 224.8 L684.2 224.6 L682.9 224.4 L681.5 224.2 L680.1 223.9 L678.7 223.6 L677.2 223.3 L675.8 223.0 L674.3 222.7 L672.8 222.4 L671.4 222.0 L670.0 221.7 L668.6 221.3 L667.2 221.0 L665.8 220.6 L664.4 220.2 L663.0 219.8 L661.6 219.4 L660.3 219.0 L658.9 218.6 L657.5 218.1 L656.1 217.7 L654.7 217.2 L653.3 216.7 L651.9 216.2 L650.5 215.7 L649.1 215.1 L647.8 214.6 L646.4 214.0 L645.0 213.4 L643.6 212.9 L642.2 212.3 L640.9 211.7 L639.5 211.1 L638.1 210.6 L636.7 210.0 L635.3 209.4 L633.9 208.9 L632.4 208.3 L631.0 207.7 L629.5 207.2 L628.0 206.6 L626.6 206.1 L625.2 205.5 L623.8 205.0 L622.5 204.5 L621.2 204.0 L620.0 203.5 L618.9 203.1 L617.8 202.7 L616.8 202.3 L615.9 202.0 L614.9 201.7 L614.0 201.4 L613.2 201.1 L612.3 200.8 L611.3 200.4 L610.4 200.0 L609.4 199.5 L608.3 199.0 L607.1 198.4 L605.9 197.8 L604.7 197.1 L603.4 196.3 L602.0 195.5 L600.7 194.7 L599.4 193.9 L598.1 193.1 L596.8 192.3 L595.5 191.5 L594.4 190.7 L593.3 190.0 L592.3 189.3 L591.3 188.6 L590.4 188.0 L589.6 187.4 L588.8 186.8 L588.0 186.1 L587.2 185.5 L586.4 184.8 L585.7 184.1 L584.9 183.4 L584.1 182.6 L583.3 181.7 L582.5 180.8 L581.6 179.7 L580.7 178.6 L579.8 177.5 L578.9 176.3 L578.0 175.1 L577.1 173.9 L576.3 172.7 L575.4 171.5 L574.7 170.4 L574.0 169.3 L573.3 168.3 L572.7 167.3 L572.1 166.4 L571.6 165.4 L571.1 164.5 L570.6 163.6 L570.2 162.8 L569.8 161.9 L569.5 161.1 L569.1 160.4 L568.8 159.6 L568.6 159.0 L568.3 158.3 L568.1 157.7 L567.8 157.1 L567.6 156.6 L567.4 156.1 L567.2 155.6 L567.1 155.2 L567.0 154.8 L567.0 154.4 L567.0 154.1 L567.1 153.8 L567.3 153.5Z" fill="url(#gShL)"/>
<path d="M567.4 157.9 L569.6 162.8 L572.1 167.2 L574.7 171.1 L577.4 174.8 L580.2 178.4 L583.0 181.7 L586.1 184.6 L589.2 187.1 L592.5 189.3 L595.8 191.5 L599.2 193.6 L602.5 195.6 L606.0 197.5 L609.5 199.2 L613.0 200.7 L616.7 202.0 L620.4 203.3 L624.0 204.7 L627.6 206.1 L631.2 207.5 L634.8 208.9 L638.4 210.3 L642.0 211.8 L645.6 213.3 L649.2 214.7 L652.8 216.1 L656.4 217.4 L660.1 218.6 L663.8 219.8 L667.6 220.8 L671.4 221.8 L675.2 222.7 L679.0 223.5 L682.9 224.3 L686.8 224.9 L690.8 225.4 L694.9 225.6 L699.1 225.4 L703.4 225.0 L708.0 223.9 M567.5 157.5 L569.9 162.2 L572.4 166.2 L575.1 170.0 L577.9 173.4 L580.8 176.8 L583.7 179.9 L586.8 182.6 L590.1 184.9 L593.4 187.1 L596.7 189.2 L600.1 191.2 L603.5 193.2 L606.9 195.0 L610.4 196.7 L614.0 198.1 L617.7 199.4 L621.4 200.7 L625.0 202.0 L628.6 203.4 L632.3 204.8 L635.9 206.2 L639.5 207.6 L643.1 209.1 L646.6 210.6 L650.2 212.0 L653.8 213.4 L657.5 214.7 L661.2 216.0 L664.9 217.2 L668.6 218.2 L672.4 219.3 L676.1 220.2 L680.0 221.1 L683.8 222.0 L687.7 222.7 L691.6 223.3 L695.6 223.6 L699.8 223.7 L704.0 223.4 L708.5 222.8 M567.8 156.9 L570.4 160.9 L573.1 164.5 L576.0 167.8 L579.0 170.8 L582.0 173.7 L585.1 176.4 L588.3 178.8 L591.6 181.0 L595.0 182.9 L598.4 184.9 L601.9 186.7 L605.3 188.5 L608.8 190.3 L612.3 191.9 L615.9 193.3 L619.6 194.6 L623.3 195.8 L626.9 197.1 L630.6 198.4 L634.2 199.8 L637.9 201.1 L641.5 202.5 L645.0 204.0 L648.6 205.5 L652.2 206.9 L655.8 208.4 L659.5 209.7 L663.1 211.0 L666.8 212.2 L670.5 213.4 L674.2 214.6 L677.9 215.6 L681.7 216.7 L685.5 217.7 L689.3 218.6 L693.1 219.4 L697.1 220.0 L701.1 220.3 L705.1 220.6 L709.3 220.5 M568.1 156.0 L571.0 159.3 L574.0 162.2 L577.1 164.8 L580.4 167.3 L583.6 169.6 L586.9 171.8 L590.3 173.8 L593.7 175.6 L597.2 177.3 L600.7 179.0 L604.2 180.7 L607.8 182.3 L611.3 183.9 L614.8 185.5 L618.5 186.8 L622.2 188.1 L625.8 189.3 L629.5 190.5 L633.2 191.7 L636.9 193.0 L640.5 194.3 L644.1 195.7 L647.7 197.1 L651.3 198.6 L654.9 200.1 L658.5 201.5 L662.1 202.9 L665.8 204.3 L669.4 205.6 L673.0 206.9 L676.7 208.2 L680.4 209.4 L684.1 210.6 L687.8 211.8 L691.5 213.0 L695.2 214.1 L699.0 215.0 L702.8 215.9 L706.7 216.7 L710.5 217.5 M568.5 155.0 L571.7 157.4 L575.1 159.5 L578.5 161.5 L581.9 163.3 L585.4 165.0 L588.9 166.6 L592.5 168.1 L596.1 169.5 L599.7 170.9 L603.3 172.3 L606.9 173.8 L610.5 175.2 L614.1 176.7 L617.7 178.2 L621.4 179.5 L625.1 180.7 L628.8 181.8 L632.5 183.0 L636.2 184.1 L639.9 185.3 L643.6 186.5 L647.2 187.9 L650.8 189.3 L654.4 190.8 L658.0 192.3 L661.6 193.7 L665.2 195.2 L668.7 196.6 L672.3 198.1 L675.9 199.5 L679.6 200.9 L683.2 202.3 L686.8 203.8 L690.4 205.2 L694.0 206.7 L697.6 208.1 L701.2 209.4 L704.8 210.8 L708.4 212.3 L711.8 214.1 M568.9 154.0 L572.5 155.5 L576.1 156.8 L579.8 158.1 L583.5 159.2 L587.2 160.3 L591.0 161.3 L594.8 162.4 L598.5 163.4 L602.2 164.5 L606.0 165.7 L609.6 166.9 L613.3 168.2 L616.9 169.5 L620.6 170.8 L624.3 172.1 L628.0 173.3 L631.7 174.4 L635.4 175.5 L639.2 176.5 L642.9 177.6 L646.6 178.8 L650.2 180.1 L653.9 181.5 L657.5 183.0 L661.0 184.4 L664.6 185.9 L668.2 187.5 L671.7 189.0 L675.3 190.5 L678.9 192.1 L682.4 193.7 L685.9 195.3 L689.5 196.9 L693.0 198.6 L696.4 200.3 L699.9 202.1 L703.4 203.8 L706.8 205.7 L710.1 208.0 L713.2 210.8 M569.3 153.1 L573.1 153.8 L577.0 154.5 L580.9 155.2 L584.9 155.7 L588.8 156.2 L592.8 156.7 L596.7 157.3 L600.6 158.1 L604.5 158.9 L608.2 159.8 L612.0 160.8 L615.7 162.0 L619.4 163.1 L623.1 164.4 L626.8 165.6 L630.5 166.7 L634.2 167.8 L638.0 168.8 L641.8 169.8 L645.6 170.8 L649.3 172.0 L652.9 173.3 L656.5 174.6 L660.1 176.1 L663.7 177.6 L667.3 179.1 L670.8 180.7 L674.4 182.3 L677.9 183.9 L681.4 185.6 L684.9 187.3 L688.4 189.0 L691.8 190.9 L695.2 192.8 L698.6 194.7 L702.0 196.8 L705.3 198.9 L708.6 201.2 L711.6 204.1 L714.3 207.8 M569.5 152.5 L573.6 152.6 L577.7 152.7 L581.8 153.0 L585.9 153.1 L590.0 153.2 L594.1 153.3 L598.2 153.6 L602.2 154.1 L606.1 154.7 L609.9 155.5 L613.8 156.3 L617.5 157.3 L621.3 158.4 L625.0 159.6 L628.7 160.8 L632.4 161.9 L636.2 163.0 L639.9 163.9 L643.7 164.8 L647.5 165.8 L651.3 166.9 L654.9 168.2 L658.5 169.6 L662.1 171.0 L665.7 172.5 L669.3 174.0 L672.8 175.6 L676.3 177.3 L679.8 179.0 L683.3 180.7 L686.7 182.6 L690.2 184.4 L693.6 186.4 L696.9 188.4 L700.3 190.6 L703.5 192.8 L706.8 195.2 L709.9 197.9 L712.7 201.2 L715.2 205.5 M569.6 152.1 L573.9 151.9 L578.1 151.8 L582.3 151.8 L586.5 151.7 L590.7 151.5 L594.9 151.5 L599.0 151.6 L603.0 152.0 L607.0 152.5 L610.9 153.2 L614.7 154.0 L618.5 154.9 L622.3 155.9 L626.0 157.1 L629.7 158.2 L633.4 159.3 L637.2 160.4 L641.0 161.3 L644.8 162.2 L648.6 163.1 L652.3 164.2 L656.0 165.5 L659.6 166.8 L663.2 168.3 L666.8 169.8 L670.3 171.3 L673.9 172.9 L677.4 174.6 L680.9 176.4 L684.3 178.2 L687.7 180.0 L691.1 182.0 L694.5 184.0 L697.8 186.1 L701.1 188.4 L704.3 190.7 L707.5 193.3 L710.6 196.1 L713.3 199.7 L715.7 204.4 M577.6 151.7 L578.7 153.0 L579.7 154.3 L580.5 155.5 L581.2 156.6 L581.7 157.7 L582.1 158.7 L582.3 159.6 L582.4 160.5 L582.3 161.4 L582.1 162.2 L581.7 162.9 L581.2 163.5 L580.6 164.2 L579.7 164.7 L578.8 165.2 L577.7 165.6 L576.4 166.0 L575.0 166.3 L573.4 166.6 L571.7 166.8 M587.3 151.4 L588.2 153.2 L589.0 154.9 L589.6 156.6 L590.1 158.1 L590.5 159.7 L590.7 161.1 L590.7 162.6 L590.6 163.9 L590.4 165.2 L590.0 166.5 L589.4 167.6 L588.7 168.8 L587.9 169.8 L586.9 170.8 L585.7 171.8 L584.4 172.7 L583.0 173.5 L581.4 174.3 L579.7 175.0 L577.8 175.6 M596.9 151.3 L597.6 153.4 L598.3 155.5 L598.8 157.6 L599.1 159.6 L599.3 161.5 L599.3 163.3 L599.2 165.2 L599.0 166.9 L598.6 168.6 L598.0 170.2 L597.3 171.8 L596.5 173.3 L595.5 174.8 L594.3 176.1 L593.0 177.5 L591.6 178.8 L590.0 180.0 L588.2 181.2 L586.4 182.3 L584.3 183.3 M606.1 152.1 L606.8 154.5 L607.3 156.8 L607.7 159.1 L608.0 161.3 L608.0 163.5 L608.0 165.6 L607.8 167.7 L607.4 169.7 L606.9 171.6 L606.3 173.5 L605.5 175.3 L604.5 177.1 L603.4 178.8 L602.2 180.4 L600.8 182.0 L599.3 183.5 L597.6 185.0 L595.7 186.4 L593.7 187.8 L591.6 189.1 M615.0 153.7 L615.6 156.3 L616.1 158.8 L616.4 161.2 L616.6 163.6 L616.6 166.0 L616.5 168.2 L616.2 170.5 L615.8 172.6 L615.2 174.7 L614.5 176.8 L613.7 178.7 L612.7 180.7 L611.5 182.5 L610.2 184.4 L608.7 186.1 L607.1 187.8 L605.4 189.4 L603.4 191.0 L601.4 192.5 L599.2 194.0 M623.6 156.0 L624.2 158.7 L624.6 161.3 L624.9 163.8 L625.1 166.3 L625.0 168.8 L624.9 171.2 L624.6 173.5 L624.1 175.8 L623.5 178.0 L622.7 180.1 L621.8 182.2 L620.8 184.2 L619.6 186.2 L618.2 188.1 L616.7 190.0 L615.1 191.8 L613.3 193.5 L611.3 195.2 L609.2 196.9 L607.0 198.4 M632.1 158.6 L632.7 161.3 L633.1 164.0 L633.4 166.6 L633.5 169.1 L633.5 171.6 L633.3 174.0 L633.0 176.4 L632.5 178.7 L631.9 180.9 L631.1 183.1 L630.2 185.3 L629.1 187.3 L627.9 189.4 L626.5 191.3 L625.0 193.2 L623.3 195.1 L621.5 196.8 L619.6 198.6 L617.5 200.2 L615.2 201.8 M640.8 160.9 L641.3 163.6 L641.7 166.3 L642.0 169.0 L642.1 171.6 L642.0 174.1 L641.9 176.5 L641.5 178.9 L641.0 181.3 L640.4 183.6 L639.6 185.8 L638.7 188.0 L637.6 190.1 L636.3 192.1 L635.0 194.1 L633.4 196.1 L631.7 197.9 L629.9 199.8 L627.9 201.5 L625.8 203.2 L623.5 204.9 M649.5 163.0 L650.0 165.8 L650.4 168.5 L650.6 171.2 L650.7 173.9 L650.7 176.4 L650.4 179.0 L650.1 181.4 L649.6 183.8 L648.9 186.2 L648.1 188.4 L647.1 190.7 L646.0 192.8 L644.8 194.9 L643.4 197.0 L641.8 199.0 L640.1 200.9 L638.3 202.8 L636.3 204.6 L634.1 206.4 L631.8 208.1 M657.9 165.8 L658.4 168.6 L658.8 171.4 L659.0 174.1 L659.1 176.8 L659.0 179.4 L658.8 181.9 L658.4 184.4 L657.9 186.8 L657.2 189.2 L656.4 191.5 L655.5 193.8 L654.3 196.0 L653.1 198.1 L651.7 200.2 L650.1 202.2 L648.4 204.1 L646.5 206.0 L644.5 207.9 L642.4 209.7 L640.1 211.4 M666.2 169.1 L666.7 171.9 L667.1 174.7 L667.3 177.4 L667.3 180.1 L667.3 182.7 L667.0 185.2 L666.7 187.7 L666.1 190.2 L665.5 192.5 L664.7 194.9 L663.7 197.1 L662.6 199.3 L661.3 201.4 L659.9 203.5 L658.3 205.6 L656.6 207.5 L654.7 209.4 L652.7 211.3 L650.6 213.1 L648.3 214.8 M674.3 172.7 L674.8 175.5 L675.2 178.3 L675.4 181.0 L675.5 183.6 L675.4 186.2 L675.2 188.7 L674.9 191.2 L674.3 193.6 L673.7 195.9 L672.9 198.2 L671.9 200.4 L670.8 202.6 L669.6 204.7 L668.1 206.8 L666.6 208.8 L664.9 210.7 L663.0 212.6 L661.0 214.4 L658.9 216.2 L656.6 217.9 M682.3 176.7 L682.8 179.4 L683.2 182.1 L683.5 184.8 L683.6 187.3 L683.5 189.8 L683.4 192.3 L683.0 194.7 L682.5 197.0 L681.9 199.3 L681.1 201.5 L680.2 203.7 L679.1 205.8 L677.9 207.8 L676.5 209.8 L675.0 211.7 L673.3 213.6 L671.5 215.4 L669.5 217.2 L667.4 218.9 L665.1 220.5 M690.1 181.0 L690.7 183.6 L691.2 186.2 L691.5 188.7 L691.6 191.2 L691.6 193.6 L691.5 196.0 L691.2 198.2 L690.7 200.5 L690.1 202.7 L689.4 204.8 L688.5 206.8 L687.4 208.8 L686.3 210.8 L684.9 212.7 L683.4 214.5 L681.8 216.2 L680.0 218.0 L678.1 219.6 L676.0 221.2 L673.8 222.7 M697.8 185.7 L698.4 188.2 L698.9 190.7 L699.3 193.0 L699.5 195.4 L699.6 197.6 L699.5 199.8 L699.2 202.0 L698.8 204.1 L698.3 206.1 L697.6 208.1 L696.8 210.0 L695.8 211.8 L694.7 213.6 L693.4 215.4 L692.0 217.0 L690.4 218.7 L688.7 220.2 L686.8 221.7 L684.8 223.2 L682.6 224.6 M705.2 191.1 L706.0 193.4 L706.5 195.6 L707.0 197.8 L707.3 199.9 L707.4 201.9 L707.4 203.9 L707.2 205.9 L706.9 207.7 L706.5 209.6 L705.9 211.3 L705.1 213.0 L704.2 214.7 L703.2 216.3 L702.0 217.8 L700.6 219.3 L699.1 220.7 L697.5 222.0 L695.7 223.3 L693.7 224.6 L691.6 225.7 M712.2 197.7 L713.0 199.7 L713.8 201.5 L714.3 203.4 L714.8 205.1 L715.0 206.8 L715.2 208.5 L715.1 210.1 L715.0 211.6 L714.6 213.1 L714.2 214.5 L713.6 215.8 L712.8 217.1 L711.9 218.4 L710.8 219.6 L709.6 220.7 L708.2 221.7 L706.7 222.8 L705.1 223.7 L703.3 224.6 L701.3 225.4" stroke="#ffff90" stroke-opacity="0.38" stroke-width="0.45" fill="none" clip-path="url(#cLo)"/>
<g fill="#1438ff"><path d="M567.8 152.8C564.6 151 560.6 143.6 561.4 139C562 136.6 565 136.8 566 139.4C567.6 143 568.8 148.6 567.8 152.8Z"/>
<path d="M567.8 153.4C564 154.6 559.6 153.2 557.8 150.8C559 148.2 564.6 149.4 567.8 153.4Z"/>
<path d="M568 153C567.4 156.4 564.8 159.2 561.6 158.8C561.2 156 564 153.2 568 153Z"/>
<path d="M567.4 152.6C565.6 150 564.2 146 564.6 143.4C566 145.6 567.4 149.6 567.4 152.6Z" fill="#2c58ff"/></g>
<path d="M455.7 239V254.3L439.8 260.7M455.7 254.3L466.3 262.8" stroke="#484848" stroke-width="0.75" fill="none"/>
</g></svg>
<svg class="b tx" width="1" height="1"><text x="455.90" y="238.20" transform="rotate(0.04 455.9 238.2)" font-size="6.40" fill="#222" stroke="#222" stroke-width="0.05">z</text></svg>
<svg class="b tx" width="1" height="1"><text x="434.80" y="263.60" transform="rotate(0.04 434.8 263.6)" font-size="6.40" fill="#222" stroke="#222" stroke-width="0.05">x</text></svg>
<svg class="b tx" width="1" height="1"><text x="466.60" y="264.20" transform="rotate(0.04 466.6 264.2)" font-size="6.40" fill="#222" stroke="#222" stroke-width="0.05">y</text></svg>
<div class="b" style="left:351.30px;top:296.60px;width:410.00px;height:95.10px;background:#f0f0f0"></div>
<div class="b" style="left:351.30px;top:296.60px;width:410.00px;height:16.80px;background:#fff"></div>
<svg class="b" style="left:355.90px;top:299.90px;" width="8.9" height="8.9" viewBox="0 0 8.9 8.9"><rect x="0" y="0" width="8.9" height="8.9" rx="1.3" fill="#050505"/><ellipse cx="1.6" cy="4.2" rx="0.75" ry="1.3" fill="#6f9f38"/><path d="M3.5 2.6V5.2a2.1 2.5 0 0 0 4.2 0V1.5" fill="none" stroke="#d6379c" stroke-width="1.5"/><path d="M7.5 1.5V5.6" stroke="#8c44b4" stroke-width="1.1"/><ellipse cx="3.6" cy="4.2" rx="0.7" ry="1.3" fill="#e0603c"/><ellipse cx="5.5" cy="3.8" rx="0.9" ry="1.5" fill="#3868e0"/><ellipse cx="5.3" cy="7.2" rx="1.3" ry="0.8" fill="#f0203c"/><ellipse cx="5.4" cy="2" rx="0.9" ry="0.9" fill="#e040a0"/></svg>
<svg class="b tx" width="1" height="1"><text x="368.30" y="307.00" transform="rotate(0.04 368.3 307.0)" font-size="6.32" fill="#9a9a9a" stroke="#9a9a9a" stroke-width="0.05">Transmission Lines</text></svg>
<svg class="b" style="left:690.00px;top:296.60px;" width="68" height="16" viewBox="0 0 68 16"><g fill="none" stroke="#a8a8a8" stroke-width="0.7"><path d="M4.2 7.9h5.8"/><rect x="29.2" y="5.1" width="6" height="5.6"/><path d="M55.3 5.1l6 5.7M61.3 5.1l-6 5.7"/></g></svg>
<div class="b" style="left:356.00px;top:318.40px;width:267.50px;height:68.00px;background:#fff;border:0.6px solid #b8b8b8"></div>
<div class="b" style="left:356.50px;top:319.00px;width:36.50px;height:15.00px;background:linear-gradient(#ffffff 0%,#f7f7f7 45%,#e0e0e0 100%);border-right:1px solid #d2d2d2;border-bottom:1px solid #d0d0d0"></div>
<div class="b" style="left:393.00px;top:319.00px;width:37.00px;height:15.00px;background:linear-gradient(#ffffff 0%,#f7f7f7 45%,#e0e0e0 100%);border-right:1px solid #d2d2d2;border-bottom:1px solid #d0d0d0"></div>
<div class="b" style="left:430.00px;top:319.00px;width:37.00px;height:15.00px;background:linear-gradient(#ffffff 0%,#f7f7f7 45%,#e0e0e0 100%);border-right:1px solid #d2d2d2;border-bottom:1px solid #d0d0d0"></div>
<div class="b" style="left:467.00px;top:319.00px;width:36.00px;height:15.00px;background:linear-gradient(#ffffff 0%,#f7f7f7 45%,#e0e0e0 100%);border-right:1px solid #d2d2d2;border-bottom:1px solid #d0d0d0"></div>
<div class="b" style="left:503.00px;top:319.00px;width:37.00px;height:15.00px;background:linear-gradient(#ffffff 0%,#f7f7f7 45%,#e0e0e0 100%);border-right:1px solid #d2d2d2;border-bottom:1px solid #d0d0d0"></div>
<div class="b" style="left:540.00px;top:319.00px;width:37.00px;height:15.00px;background:linear-gradient(#ffffff 0%,#f7f7f7 45%,#e0e0e0 100%);border-right:1px solid #d2d2d2;border-bottom:1px solid #d0d0d0"></div>
<div class="b" style="left:577.00px;top:319.00px;width:37.00px;height:15.00px;background:linear-gradient(#ffffff 0%,#f7f7f7 45%,#e0e0e0 100%);border-right:1px solid #d2d2d2;border-bottom:1px solid #d0d0d0"></div>
<div class="b" style="left:614.00px;top:319.00px;width:9.00px;height:15.00px;background:linear-gradient(#ffffff 0%,#f7f7f7 45%,#e0e0e0 100%);border-right:1px solid #d2d2d2;border-bottom:1px solid #d0d0d0"></div>
<div class="b" style="left:356.50px;top:334.00px;width:36.50px;height:14.00px;background:linear-gradient(#ffffff 0%,#f7f7f7 45%,#e0e0e0 100%);border-right:1px solid #d2d2d2;border-bottom:1px solid #d0d0d0"></div>
<div class="b" style="left:393.00px;top:334.00px;width:37.00px;height:14.00px;background:linear-gradient(#ffffff 0%,#f7f7f7 45%,#e0e0e0 100%);border-right:1px solid #d2d2d2;border-bottom:1px solid #d0d0d0"></div>
<div class="b" style="left:430.00px;top:334.00px;width:37.00px;height:14.00px;background:linear-gradient(#ffffff 0%,#f7f7f7 45%,#e0e0e0 100%);border-right:1px solid #d2d2d2;border-bottom:1px solid #d0d0d0"></div>
<div class="b" style="left:467.00px;top:334.00px;width:36.00px;height:14.00px;background:linear-gradient(#ffffff 0%,#f7f7f7 45%,#e0e0e0 100%);border-right:1px solid #d2d2d2;border-bottom:1px solid #d0d0d0"></div>
<div class="b" style="left:503.00px;top:334.00px;width:37.00px;height:14.00px;background:linear-gradient(#ffffff 0%,#f7f7f7 45%,#e0e0e0 100%);border-right:1px solid #d2d2d2;border-bottom:1px solid #d0d0d0"></div>
<div class="b" style="left:540.00px;top:334.00px;width:37.00px;height:14.00px;background:linear-gradient(#ffffff 0%,#f7f7f7 45%,#e0e0e0 100%);border-right:1px solid #d2d2d2;border-bottom:1px solid #d0d0d0"></div>
<div class="b" style="left:577.00px;top:334.00px;width:37.00px;height:14.00px;background:linear-gradient(#ffffff 0%,#f7f7f7 45%,#e0e0e0 100%);border-right:1px solid #d2d2d2;border-bottom:1px solid #d0d0d0"></div>
<div class="b" style="left:614.00px;top:334.00px;width:9.00px;height:14.00px;background:linear-gradient(#ffffff 0%,#f7f7f7 45%,#e0e0e0 100%);border-right:1px solid #d2d2d2;border-bottom:1px solid #d0d0d0"></div>
<div class="b" style="left:356.50px;top:348.00px;width:36.50px;height:13.00px;background:linear-gradient(#ffffff 0%,#f7f7f7 45%,#e0e0e0 100%);border-right:1px solid #d2d2d2;border-bottom:1px solid #d0d0d0"></div>
<div class="b" style="left:393.00px;top:348.00px;width:37.00px;height:13.00px;background:linear-gradient(#ffffff 0%,#f7f7f7 45%,#e0e0e0 100%);border-right:1px solid #d2d2d2;border-bottom:1px solid #d0d0d0"></div>
<div class="b" style="left:430.00px;top:348.00px;width:37.00px;height:13.00px;background:linear-gradient(#ffffff 0%,#f7f7f7 45%,#e0e0e0 100%);border-right:1px solid #d2d2d2;border-bottom:1px solid #d0d0d0"></div>
<div class="b" style="left:467.00px;top:348.00px;width:155.40px;height:13.00px;background:#1e90ff"></div>
<svg class="b tx" width="1" height="1"><text x="369.95" y="327.20" transform="rotate(0.04 369.9 327.2)" font-size="6.10" letter-spacing="0.036" fill="#0a0a0a" stroke="#0a0a0a" stroke-width="0.18">No.</text></svg>
<svg class="b tx" width="1" height="1"><text x="404.40" y="327.20" transform="rotate(0.04 404.4 327.2)" font-size="6.10" letter-spacing="0.054" fill="#0a0a0a" stroke="#0a0a0a" stroke-width="0.18">Port 1</text></svg>
<svg class="b tx" width="1" height="1"><text x="441.20" y="327.20" transform="rotate(0.04 441.2 327.2)" font-size="6.10" letter-spacing="0.121" fill="#0a0a0a" stroke="#0a0a0a" stroke-width="0.18">Port 2</text></svg>
<svg class="b tx" width="1" height="1"><text x="478.15" y="327.20" transform="rotate(0.04 478.1 327.2)" font-size="6.10" letter-spacing="0.119" fill="#0a0a0a" stroke="#0a0a0a" stroke-width="0.18">Type</text></svg>
<svg class="b tx" width="1" height="1"><text x="517.90" y="327.20" transform="rotate(0.04 517.9 327.2)" font-size="6.10" letter-spacing="0.041" fill="#0a0a0a" stroke="#0a0a0a" stroke-width="0.18">Z0</text></svg>
<svg class="b tx" width="1" height="1"><text x="555.20" y="327.20" transform="rotate(0.04 555.2 327.2)" font-size="6.10" letter-spacing="-0.598" fill="#0a0a0a" stroke="#0a0a0a" stroke-width="0.18">VF</text></svg>
<svg class="b tx" width="1" height="1"><text x="586.05" y="327.20" transform="rotate(0.04 586.0 327.2)" font-size="6.10" letter-spacing="0.040" fill="#0a0a0a" stroke="#0a0a0a" stroke-width="0.18">Length</text></svg>
<svg class="b tx" width="1" height="1"><text x="371.45" y="340.80" transform="rotate(0.04 371.4 340.8)" font-size="6.10" letter-spacing="0.168" fill="#555" stroke="#555" stroke-width="0.18">---</text></svg>
<svg class="b tx" width="1" height="1"><text x="408.20" y="340.80" transform="rotate(0.04 408.2 340.8)" font-size="6.10" letter-spacing="0.168" fill="#555" stroke="#555" stroke-width="0.18">---</text></svg>
<svg class="b tx" width="1" height="1"><text x="445.20" y="340.80" transform="rotate(0.04 445.2 340.8)" font-size="6.10" letter-spacing="0.168" fill="#555" stroke="#555" stroke-width="0.18">---</text></svg>
<svg class="b tx" width="1" height="1"><text x="481.70" y="340.80" transform="rotate(0.04 481.7 340.8)" font-size="6.10" letter-spacing="0.168" fill="#555" stroke="#555" stroke-width="0.18">---</text></svg>
<svg class="b tx" width="1" height="1"><text x="515.25" y="341.40" transform="rotate(0.04 515.2 341.4)" font-size="6.10" letter-spacing="-0.240" fill="#0a0a0a" stroke="#0a0a0a" stroke-width="0.18">Ohm</text></svg>
<svg class="b tx" width="1" height="1"><text x="555.20" y="340.80" transform="rotate(0.04 555.2 340.8)" font-size="6.10" letter-spacing="0.168" fill="#555" stroke="#555" stroke-width="0.18">---</text></svg>
<svg class="b tx" width="1" height="1"><text x="593.25" y="341.40" transform="rotate(0.04 593.2 341.4)" font-size="6.10" letter-spacing="-0.582" fill="#0a0a0a" stroke="#0a0a0a" stroke-width="0.18">m</text></svg>
<div class="b" style="left:614px;top:334px;width:8.600000000000023px;height:14px;overflow:hidden"><svg class="b" style="left:-614px;top:-334px;overflow:visible" width="1" height="1"><text x="617.40" y="341.40" transform="rotate(0.04 617.4 341.4)" font-size="6.10" letter-spacing="-0.131" fill="#0a0a0a" stroke="#0a0a0a" stroke-width="0.18">dB</text></svg></div>
<svg class="b tx" width="1" height="1"><text x="359.30" y="355.20" transform="rotate(0.04 359.3 355.2)" font-size="6.10" fill="#0a0a0a" stroke="#0a0a0a" stroke-width="0.18">1</text></svg>
<svg class="b tx" width="1" height="1"><text x="395.00" y="355.20" transform="rotate(0.04 395.0 355.2)" font-size="6.10" letter-spacing="-0.034" fill="#0a0a0a" stroke="#0a0a0a" stroke-width="0.18">Connected</text></svg>
<svg class="b tx" width="1" height="1"><text x="431.30" y="355.20" transform="rotate(0.04 431.3 355.2)" font-size="6.10" letter-spacing="-0.034" fill="#0a0a0a" stroke="#0a0a0a" stroke-width="0.18">Connected</text></svg>
<svg class="b tx" width="1" height="1"><text x="468.20" y="354.60" transform="rotate(0.04 468.2 354.6)" font-size="5.80" fill="#e8f3ff" stroke="#e8f3ff" stroke-width="0.18">0</text></svg>
<svg class="b tx" width="1" height="1"><text x="504.70" y="354.60" transform="rotate(0.04 504.7 354.6)" font-size="5.80" fill="#e8f3ff" stroke="#e8f3ff" stroke-width="0.18">600</text></svg>
<svg class="b tx" width="1" height="1"><text x="541.70" y="354.60" transform="rotate(0.04 541.7 354.6)" font-size="5.80" fill="#e8f3ff" stroke="#e8f3ff" stroke-width="0.18">1</text></svg>
<svg class="b tx" width="1" height="1"><text x="578.30" y="354.60" transform="rotate(0.04 578.3 354.6)" font-size="6.20" fill="#e8f3ff" stroke="#e8f3ff" stroke-width="0.18">1.604211</text></svg>
<svg class="b tx" width="1" height="1"><text x="614.20" y="354.60" transform="rotate(0.04 614.2 354.6)" font-size="5.80" fill="#e8f3ff" stroke="#e8f3ff" stroke-width="0.18">0</text></svg>
<div class="b" style="left:356.60px;top:377.00px;width:266.30px;height:8.40px;background:#f0f0f0"></div>
<div class="b" style="left:367.20px;top:377.00px;width:9.50px;height:8.40px;background:#cdcdcd"></div>
<svg class="b" style="left:360.30px;top:379.40px;" width="3.4" height="4.4" viewBox="0 0 3.4 4.4"><path d="M2.8 0.4l-2.2 1.8 2.2 1.8" fill="none" stroke="#333" stroke-width="0.9"/></svg>
<svg class="b" style="left:616.30px;top:378.80px;" width="3.4" height="4.4" viewBox="0 0 3.4 4.4"><path d="M0.6 0.4l2.2 1.8-2.2 1.8" fill="none" stroke="#333" stroke-width="0.9"/></svg>
<div class="b" style="left:633.20px;top:318.40px;width:122.80px;height:68.00px;background:#fff;border:1px solid #b9bcc2;border-top-color:#7c7c7c;border-left-color:#8c8c8c"></div>
<div class="b" style="left:634.40px;top:320.20px;width:111.00px;height:7.00px;background:#1e90ff;outline:0.5px dotted #c8c0a0;outline-offset:-0.6px"></div>
<svg class="b tx" width="1" height="1"><text x="635.00" y="325.90" transform="rotate(0.04 635.0 325.9)" font-size="5.90" fill="#fff" stroke="#fff" stroke-width="0.08">000 - Custom lossless line</text></svg>
<svg class="b tx" width="1" height="1"><text x="635.00" y="333.14" transform="rotate(0.04 635.0 333.1)" font-size="5.90" fill="#101010" stroke="#101010" stroke-width="0.08">001 - Custom line low loss model</text></svg>
<svg class="b tx" width="1" height="1"><text x="635.00" y="340.38" transform="rotate(0.04 635.0 340.4)" font-size="5.90" fill="#101010" stroke="#101010" stroke-width="0.08">002 - Custom line RLGC model</text></svg>
<svg class="b tx" width="1" height="1"><text x="635.00" y="347.62" transform="rotate(0.04 635.0 347.6)" font-size="5.90" fill="#101010" stroke="#101010" stroke-width="0.08">003 - 50 Ohm lossless line</text></svg>
<svg class="b tx" width="1" height="1"><text x="635.00" y="354.86" transform="rotate(0.04 635.0 354.9)" font-size="5.90" fill="#101010" stroke="#101010" stroke-width="0.08">004 - 75 Ohm lossless line</text></svg>
<svg class="b tx" width="1" height="1"><text x="635.00" y="362.10" transform="rotate(0.04 635.0 362.1)" font-size="5.90" fill="#101010" stroke="#101010" stroke-width="0.08">005 - 1/2" 50 Ohm Hardline</text></svg>
<svg class="b tx" width="1" height="1"><text x="635.00" y="369.34" transform="rotate(0.04 635.0 369.3)" font-size="5.90" fill="#101010" stroke="#101010" stroke-width="0.08">006 - 1/2" 75 Ohm Hardline</text></svg>
<svg class="b tx" width="1" height="1"><text x="635.00" y="376.58" transform="rotate(0.04 635.0 376.6)" font-size="5.90" fill="#101010" stroke="#101010" stroke-width="0.08">007 - 7/8" 50 Ohm Hardline</text></svg>
<svg class="b tx" width="1" height="1"><text x="635.00" y="383.82" transform="rotate(0.04 635.0 383.8)" font-size="5.90" fill="#101010" stroke="#101010" stroke-width="0.08">008 - 7/8" 75 Ohm Hardline</text></svg>
<div class="b" style="left:745.60px;top:319.20px;width:9.80px;height:66.60px;background:#f0f0f0"></div>
<div class="b" style="left:746.80px;top:329.50px;width:7.40px;height:9.20px;background:#c1c1c1"></div>
<svg class="b" style="left:748.00px;top:322.60px;" width="5" height="3.4" viewBox="0 0 5 3.4"><path d="M0.4 2.8l2.1-2.2 2.1 2.2" fill="none" stroke="#333" stroke-width="0.9"/></svg>
<svg class="b" style="left:748.00px;top:379.60px;" width="5" height="3.4" viewBox="0 0 5 3.4"><path d="M0.4 0.5l2.1 2.2 2.1-2.2" fill="none" stroke="#333" stroke-width="0.9"/></svg>
</div></body></html>
